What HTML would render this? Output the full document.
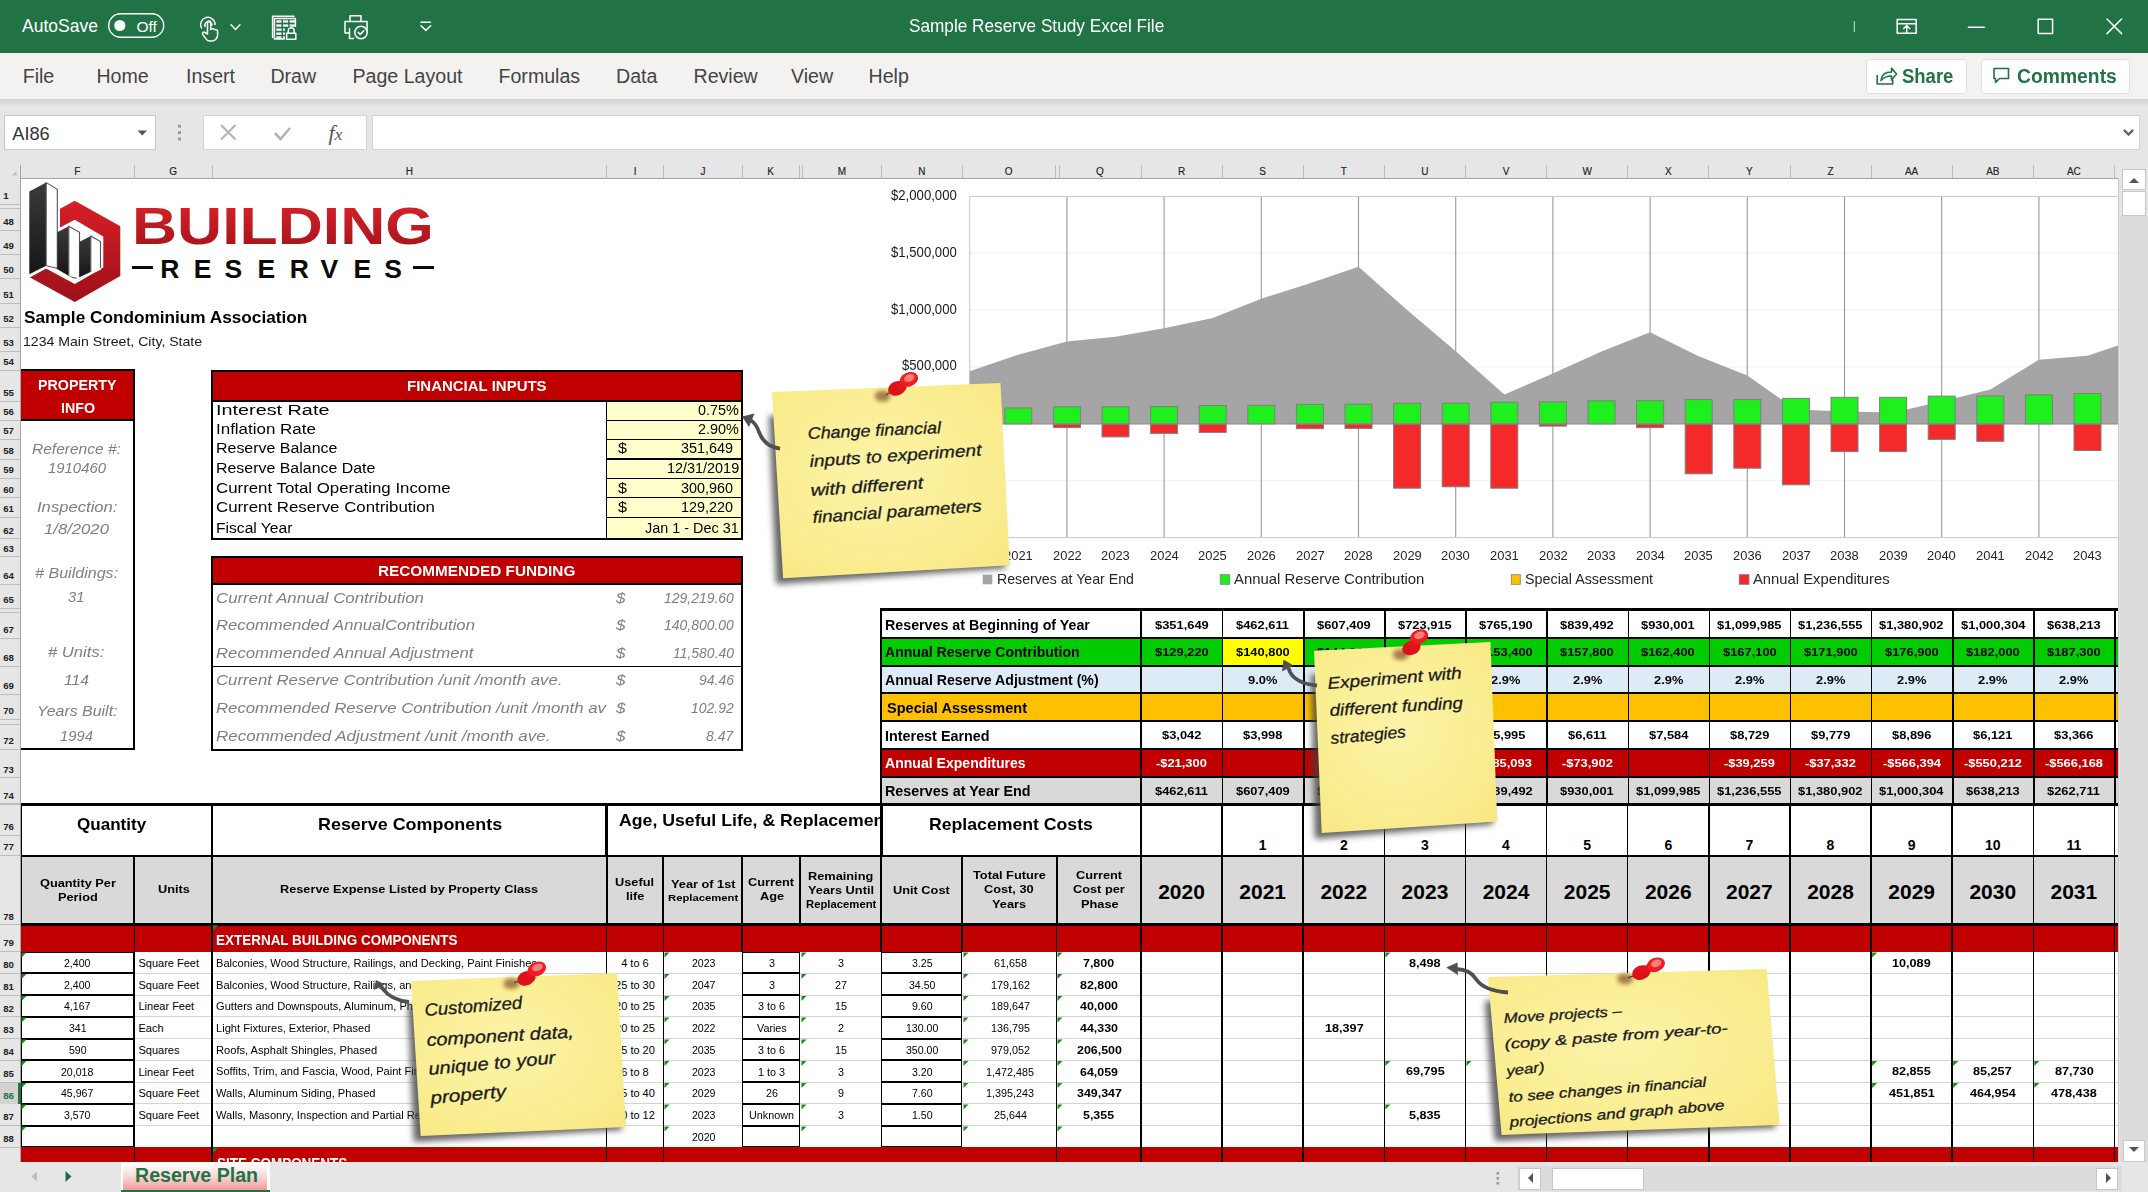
<!DOCTYPE html>
<html><head><meta charset="utf-8"><title>Sample Reserve Study Excel File</title>
<style>
html,body{margin:0;padding:0;}
body{width:2148px;height:1192px;overflow:hidden;position:relative;background:#fff;font-family:"Liberation Sans",sans-serif;}
div,svg{position:absolute;}
.a{position:absolute;overflow:visible;}
.t{display:flex;white-space:nowrap;overflow:hidden;}
.tx{white-space:nowrap;line-height:1;}
</style></head><body>
<div style="left:0.0px;top:0.0px;width:2148.0px;height:53.0px;background:#217346;"></div>
<div class="tx" style="left:22.0px;top:17.8px;font-size:17.5px;color:#fff;">AutoSave</div>
<svg class="a" style="left:0;top:0" width="2148" height="53" viewBox="0 0 2148 53">
<g fill="none" stroke="#fff" stroke-width="1.4">
<rect x="108.7" y="13.7" width="55" height="23.6" rx="11.8"/>
</g>
<circle cx="119.8" cy="25.5" r="5.6" fill="#fff"/>
<g fill="none" stroke="#fff" stroke-width="1.5" stroke-linecap="round" stroke-linejoin="round">
<path d="M201.5 28 a7.2 7.2 0 1 1 13.5 -3.5"/>
<path d="M205 26.5 a3.6 3.6 0 1 1 7 -1.5"/>
<path d="M207.5 34 v-11.5 a1.6 1.6 0 0 1 3.2 0 v7 l1.8-0.6 a1.5 1.5 0 0 1 2 0.6 l1.5 0.2 a1.4 1.4 0 0 1 1.6 1.3 v4 a6 6 0 0 1 -6 6 h-1.5 a5 5 0 0 1 -4.2 -2.2 l-3.2-4.4 a1.5 1.5 0 0 1 2.3-1.9 z"/>
<path d="M231 24.8 l4.5 4.6 l4.5 -4.6"/>
<path d="M272.6 37.5 V16.2 H294" /><rect x="274.4" y="18.4" width="21" height="20.6"/><rect x="276.3" y="20.3" width="5.2" height="2.3" fill="#fff" stroke="none"/><rect x="283.0" y="20.3" width="5.2" height="2.3" fill="#fff" stroke="none"/><rect x="289.7" y="20.3" width="5.2" height="2.3" fill="#fff" stroke="none"/><rect x="276.3" y="24.4" width="5.2" height="2.3" fill="#fff" stroke="none"/><rect x="283.0" y="24.4" width="5.2" height="2.3" fill="#fff" stroke="none"/><rect x="289.7" y="24.4" width="5.2" height="2.3" fill="#fff" stroke="none"/><rect x="276.3" y="28.5" width="5.2" height="2.3" fill="#fff" stroke="none"/><rect x="283.0" y="28.5" width="5.2" height="2.3" fill="#fff" stroke="none"/><rect x="289.7" y="28.5" width="5.2" height="2.3" fill="#fff" stroke="none"/><rect x="276.3" y="32.5" width="5.2" height="2.3" fill="#fff" stroke="none"/><rect x="283.0" y="32.5" width="5.2" height="2.3" fill="#fff" stroke="none"/><rect x="289.7" y="32.5" width="5.2" height="2.3" fill="#fff" stroke="none"/><rect x="276.3" y="36.4" width="5.2" height="2.3" fill="#fff" stroke="none"/><rect x="283.0" y="36.4" width="5.2" height="2.3" fill="#fff" stroke="none"/><rect x="289.7" y="36.4" width="5.2" height="2.3" fill="#fff" stroke="none"/><rect x="284.8" y="27" width="12.5" height="13.5" fill="#217346" stroke="none"/><rect x="286.6" y="33.2" width="9.2" height="6" /><path d="M288.3 33.2 v-2.6 a2.9 2.9 0 0 1 5.8 0 v2.6"/>
<path d="M345 21.5 h22 v9 M345 21.5 v11.5 h4.5 M349.5 28.5 v10 h4 M350 15.8 h11 v5.7 M350 15.8 v5.7"/>
<circle cx="361" cy="32.5" r="6.2"/>
<path d="M358.2 32.4 l2 2 l3.6 -3.6"/>
<path d="M421 22.2 h9.5 M421 25.8 l4.8 4.6 l4.8 -4.6"/>
<path d="M1854.3 21.5 v10" stroke-width="0.8"/>
<rect x="1897.2" y="19.5" width="19" height="13.8"/>
<path d="M1897.2 23.8 h19 M1906.7 33 v-7 M1903.7 28.5 l3-3 l3 3"/>
<path d="M1968.4 27.2 h15.8"/>
<rect x="2038.2" y="19.3" width="14.4" height="14.2"/>
<path d="M2107 19 l14.6 14.6 M2121.6 19 l-14.6 14.6"/>
</g>
</svg>
<div class="tx" style="left:136.5px;top:18.7px;font-size:15.5px;color:#fff;">Off</div>
<div class="tx" style="left:908.5px;top:16.8px;font-size:18.5px;transform:scaleX(0.9296);transform-origin:0 0;color:#fff;">Sample Reserve Study Excel File</div>
<div style="left:0.0px;top:53.0px;width:2148.0px;height:46.0px;background:#f3f2f1;"></div>
<div class="tx" style="left:22.7px;top:66.8px;font-size:19.6px;color:#444;">File</div>
<div class="tx" style="left:96.4px;top:66.8px;font-size:19.6px;color:#444;">Home</div>
<div class="tx" style="left:186.0px;top:66.8px;font-size:19.6px;color:#444;">Insert</div>
<div class="tx" style="left:270.4px;top:66.8px;font-size:19.6px;color:#444;">Draw</div>
<div class="tx" style="left:352.5px;top:66.8px;font-size:19.6px;color:#444;">Page Layout</div>
<div class="tx" style="left:498.5px;top:66.8px;font-size:19.6px;color:#444;">Formulas</div>
<div class="tx" style="left:616.0px;top:66.8px;font-size:19.6px;color:#444;">Data</div>
<div class="tx" style="left:693.5px;top:66.8px;font-size:19.6px;color:#444;">Review</div>
<div class="tx" style="left:791.0px;top:66.8px;font-size:19.6px;color:#444;">View</div>
<div class="tx" style="left:868.5px;top:66.8px;font-size:19.6px;color:#444;">Help</div>
<div style="left:1865.5px;top:59.0px;width:101.0px;height:34.5px;background:#fff;border:1px solid #e1dfdd;border-radius:4px;box-sizing:border-box;"></div>
<div style="left:1980.5px;top:59.0px;width:149.0px;height:34.5px;background:#fff;border:1px solid #e1dfdd;border-radius:4px;box-sizing:border-box;"></div>
<svg class="a" style="left:0;top:0" width="2148" height="100" viewBox="0 0 2148 100">
<g fill="none" stroke="#217346" stroke-width="1.6" stroke-linejoin="round">
<path d="M1877.2 75 v9 h15.5 v-4.5"/>
<path d="M1881 80.5 c0.5-6 4.5-8.5 10.5-8.5 v-4 l5 6 l-5 6 v-4 c-4 0-8 1.5-10.5 4.5z"/>
<path d="M1994 68.5 h14.5 v10 h-9 l-4 3.8 v-3.8 h-1.5z"/>
</g></svg>
<div class="tx" style="left:1901.6px;top:66.9px;font-size:19.4px;transform:scaleX(0.9533);transform-origin:0 0;color:#217346;font-weight:bold;">Share</div>
<div class="tx" style="left:2016.5px;top:66.9px;font-size:19.4px;transform:scaleX(0.9965);transform-origin:0 0;color:#217346;font-weight:bold;">Comments</div>
<div style="left:0.0px;top:99.0px;width:2148.0px;height:61.0px;background:linear-gradient(#d2d2d2 0px,#e6e6e6 7px,#e6e6e6 100%);"></div>
<div style="left:4.3px;top:115.3px;width:152.2px;height:35.0px;background:#fff;border:1px solid #c8c8c8;box-sizing:border-box;"></div>
<div class="tx" style="left:12.3px;top:125.1px;font-size:18.2px;color:#333;">AI86</div>
<div style="left:202.8px;top:115.3px;width:164.5px;height:35.0px;background:#fff;border:1px solid #d4d4d4;box-sizing:border-box;"></div>
<div style="left:372.0px;top:115.3px;width:1768.0px;height:35.0px;background:#fff;border:1px solid #d4d4d4;box-sizing:border-box;"></div>
<svg class="a" style="left:0;top:100" width="2148" height="60" viewBox="0 100 2148 60">
<path d="M137.5 130.5 h9.5 l-4.75 5z" fill="#555"/>
<rect x="178" y="124.8" width="3" height="2.8" fill="#9a9a9a"/>
<rect x="178" y="131.2" width="3" height="2.8" fill="#9a9a9a"/>
<rect x="178" y="137.6" width="3" height="2.8" fill="#9a9a9a"/>
<path d="M2124 130 l4.5 4.5 l4.5 -4.5" fill="none" stroke="#555" stroke-width="2"/>
<g fill="none" stroke="#b4b4b4" stroke-width="1.8">
<path d="M221 125 l14.5 14.5 M235.5 125 l-14.5 14.5" stroke-width="2.2"/>
<path d="M275 133 l5.5 6 l9.5 -11" stroke-width="2.6"/>
</g>
</svg>
<svg class="a" style="left:0;top:100" width="2148" height="60" viewBox="0 100 2148 60"><path d="M2124 130 l4.5 4.5 l4.5 -4.5" fill="none" stroke="#666" stroke-width="2"/></svg>
<div class="tx" style="left:328.5px;top:122.4px;font-size:22px;color:#555;font-family:&quot;Liberation Serif&quot;,serif;"><i>f</i><i style="font-size:17px">x</i></div>
<svg class="a" style="left:0;top:178px" width="450" height="130" viewBox="0 178 450 130">
<defs>
<linearGradient id="gr" x1="0" y1="0" x2="0" y2="1"><stop offset="0" stop-color="#d71f27"/><stop offset="1" stop-color="#9e1119"/></linearGradient>
<linearGradient id="gk" x1="0" y1="0" x2="0" y2="1"><stop offset="0" stop-color="#3a3a3c"/><stop offset="1" stop-color="#161618"/></linearGradient>
</defs>
<path d="M60 208.7 L74.8 200.8 L120.3 226.3 L120.3 276 L74.8 302 L29.6 277.3 L46 268.5 L74.8 284 L103.3 267.5 L103.3 236.5 L74.8 219.8 L60 227.5 Z" fill="url(#gr)"/>
<path d="M29.3 191.6 L46.2 182.6 L46.2 265.8 L29.3 274.2 Z" fill="url(#gk)"/>
<path d="M46.2 182.6 L57.3 189.2 L57.3 268.6 L46.2 265.8 Z" fill="#fff" stroke="#555" stroke-width="1.1"/>
<path d="M57.3 232.2 L68.8 226.3 L68.8 276.5 L57.3 270.5 Z" fill="url(#gk)"/>
<path d="M68.8 226.3 L79.5 232.3 L79.5 279 L68.8 276.5 Z" fill="#fff" stroke="#555" stroke-width="1.1"/>
<path d="M79.5 241.8 L90.8 236 L90.8 272.5 L79.5 279 Z" fill="url(#gk)"/>
<path d="M90.8 236 L100.5 241.5 L100.5 268.5 L90.8 272.5 Z" fill="#fff" stroke="#555" stroke-width="1.1"/>
<path d="M29.5 276.5 L46.2 267.2 L57.3 270.3 M57.3 270.3 L74.8 280.5 L100.8 268.5" fill="none" stroke="#fff" stroke-width="2"/>
</g>
</svg>
<div class="tx" style="left:131.5px;top:201.0px;font-size:51.5px;font-weight:bold;transform:scaleX(1.2129);transform-origin:0 0;background:linear-gradient(#d9222a,#a3121a);-webkit-background-clip:text;background-clip:text;color:transparent;">BUILDING</div>
<div class="tx" style="left:160.3px;top:255.9px;font-size:26.5px;transform:scaleX(1.0000);transform-origin:0 0;color:#0a0a0a;font-weight:bold;">R</div>
<div class="tx" style="left:193.8px;top:255.9px;font-size:26.5px;transform:scaleX(1.0000);transform-origin:0 0;color:#0a0a0a;font-weight:bold;">E</div>
<div class="tx" style="left:224.5px;top:255.9px;font-size:26.5px;transform:scaleX(1.0000);transform-origin:0 0;color:#0a0a0a;font-weight:bold;">S</div>
<div class="tx" style="left:257.5px;top:255.9px;font-size:26.5px;transform:scaleX(1.0000);transform-origin:0 0;color:#0a0a0a;font-weight:bold;">E</div>
<div class="tx" style="left:289.8px;top:255.9px;font-size:26.5px;transform:scaleX(1.0000);transform-origin:0 0;color:#0a0a0a;font-weight:bold;">R</div>
<div class="tx" style="left:320.5px;top:255.9px;font-size:26.5px;transform:scaleX(1.0000);transform-origin:0 0;color:#0a0a0a;font-weight:bold;">V</div>
<div class="tx" style="left:353.5px;top:255.9px;font-size:26.5px;transform:scaleX(1.0000);transform-origin:0 0;color:#0a0a0a;font-weight:bold;">E</div>
<div class="tx" style="left:384.2px;top:255.9px;font-size:26.5px;transform:scaleX(1.0000);transform-origin:0 0;color:#0a0a0a;font-weight:bold;">S</div>
<div style="left:131.5px;top:266.3px;width:21.0px;height:2.8px;background:#0a0a0a;"></div>
<div style="left:412.5px;top:266.3px;width:21.0px;height:2.8px;background:#0a0a0a;"></div>
<div class="tx" style="left:24.4px;top:309.5px;font-size:16px;transform:scaleX(1.0754);transform-origin:0 0;color:#000;font-weight:bold;">Sample Condominium Association</div>
<div class="tx" style="left:23.3px;top:334.7px;font-size:13.6px;transform:scaleX(1.0367);transform-origin:0 0;color:#1a1a1a;">1234 Main Street, City, State</div>
<div style="left:20.0px;top:369.0px;width:115.0px;height:381.0px;border:2px solid #000;border-left:none;box-sizing:border-box;background:#fff;"></div>
<div style="left:20.0px;top:371.0px;width:113.0px;height:48.5px;background:#c00000;"></div>
<div style="left:20.0px;top:419.0px;width:115.0px;height:2.0px;background:#000;"></div>
<div class="tx" style="left:38.0px;top:376.9px;font-size:15px;transform:scaleX(0.9500);transform-origin:0 0;color:#fff;font-weight:bold;">PROPERTY</div>
<div class="tx" style="left:60.8px;top:399.8px;font-size:15px;transform:scaleX(0.9500);transform-origin:0 0;color:#fff;font-weight:bold;">INFO</div>
<div class="tx" style="left:31.8px;top:440.6px;font-size:15px;transform:scaleX(1.0351);transform-origin:0 0;color:#7f7f7f;font-style:italic;">Reference #:</div>
<div class="tx" style="left:48.0px;top:459.6px;font-size:15px;transform:scaleX(0.9932);transform-origin:0 0;color:#7f7f7f;font-style:italic;">1910460</div>
<div class="tx" style="left:36.5px;top:498.8px;font-size:15px;transform:scaleX(1.1096);transform-origin:0 0;color:#7f7f7f;font-style:italic;">Inspection:</div>
<div class="tx" style="left:44.0px;top:520.9px;font-size:15px;transform:scaleX(1.1115);transform-origin:0 0;color:#7f7f7f;font-style:italic;">1/8/2020</div>
<div class="tx" style="left:35.2px;top:564.9px;font-size:15px;transform:scaleX(1.0716);transform-origin:0 0;color:#7f7f7f;font-style:italic;"># Buildings:</div>
<div class="tx" style="left:68.0px;top:589.4px;font-size:15px;transform:scaleX(0.9769);transform-origin:0 0;color:#7f7f7f;font-style:italic;">31</div>
<div class="tx" style="left:47.7px;top:643.7px;font-size:15px;transform:scaleX(1.1071);transform-origin:0 0;color:#7f7f7f;font-style:italic;"># Units:</div>
<div class="tx" style="left:64.4px;top:671.9px;font-size:15px;transform:scaleX(1.0412);transform-origin:0 0;color:#7f7f7f;font-style:italic;">114</div>
<div class="tx" style="left:36.9px;top:702.7px;font-size:15px;transform:scaleX(1.0610);transform-origin:0 0;color:#7f7f7f;font-style:italic;">Years Built:</div>
<div class="tx" style="left:59.7px;top:727.6px;font-size:15px;transform:scaleX(0.9859);transform-origin:0 0;color:#7f7f7f;font-style:italic;">1994</div>
<div style="left:211.0px;top:369.5px;width:532.0px;height:170.0px;border:2px solid #000;box-sizing:border-box;background:#fff;"></div>
<div style="left:213.0px;top:371.5px;width:528.0px;height:28.5px;background:#c00000;"></div>
<div style="left:211.0px;top:400.0px;width:532.0px;height:1.6px;background:#000;"></div>
<div class="tx" style="left:407.0px;top:378.2px;font-size:15px;transform:scaleX(0.9991);transform-origin:0 0;color:#fff;font-weight:bold;">FINANCIAL INPUTS</div>
<div style="left:606.7px;top:401.5px;width:134.3px;height:136.0px;background:#ffffcc;"></div>
<div style="left:606.1px;top:401.0px;width:1.3px;height:137.0px;background:#000;"></div>
<div style="left:606.7px;top:419.8px;width:134.3px;height:1.3px;background:#000;"></div>
<div style="left:606.7px;top:439.0px;width:134.3px;height:1.3px;background:#000;"></div>
<div style="left:606.7px;top:458.4px;width:134.3px;height:1.3px;background:#000;"></div>
<div style="left:606.7px;top:477.9px;width:134.3px;height:1.3px;background:#000;"></div>
<div style="left:606.7px;top:497.2px;width:134.3px;height:1.3px;background:#000;"></div>
<div style="left:606.7px;top:516.6px;width:134.3px;height:1.3px;background:#000;"></div>
<div class="tx" style="left:216.1px;top:401.6px;font-size:15.5px;transform:scaleX(1.2779);transform-origin:0 0;color:#000;">Interest Rate</div>
<div class="tx" style="left:216.1px;top:420.7px;font-size:15.5px;transform:scaleX(1.0938);transform-origin:0 0;color:#000;">Inflation Rate</div>
<div class="tx" style="left:216.1px;top:440.2px;font-size:15.5px;transform:scaleX(1.0285);transform-origin:0 0;color:#000;">Reserve Balance</div>
<div class="tx" style="left:216.1px;top:459.9px;font-size:15.5px;transform:scaleX(1.0278);transform-origin:0 0;color:#000;">Reserve Balance Date</div>
<div class="tx" style="left:216.1px;top:479.5px;font-size:15.5px;transform:scaleX(1.0863);transform-origin:0 0;color:#000;">Current Total Operating Income</div>
<div class="tx" style="left:216.1px;top:498.6px;font-size:15.5px;transform:scaleX(1.0858);transform-origin:0 0;color:#000;">Current Reserve Contribution</div>
<div class="tx" style="left:216.1px;top:519.7px;font-size:15.5px;transform:scaleX(1.0076);transform-origin:0 0;color:#000;">Fiscal Year</div>
<div class="tx" style="left:697.9px;top:401.6px;font-size:15.5px;transform:scaleX(0.9300);transform-origin:0 0;color:#000;">0.75%</div>
<div class="tx" style="left:697.9px;top:420.7px;font-size:15.5px;transform:scaleX(0.9300);transform-origin:0 0;color:#000;">2.90%</div>
<div class="tx" style="left:681.1px;top:440.2px;font-size:15.5px;transform:scaleX(0.9300);transform-origin:0 0;color:#000;">351,649</div>
<div class="tx" style="left:617.5px;top:440.2px;font-size:15.5px;transform:scaleX(1.0440);transform-origin:0 0;color:#000;">$</div>
<div class="tx" style="left:666.7px;top:459.9px;font-size:15.5px;transform:scaleX(0.9300);transform-origin:0 0;color:#000;">12/31/2019</div>
<div class="tx" style="left:681.1px;top:479.5px;font-size:15.5px;transform:scaleX(0.9300);transform-origin:0 0;color:#000;">300,960</div>
<div class="tx" style="left:617.5px;top:479.5px;font-size:15.5px;transform:scaleX(1.0440);transform-origin:0 0;color:#000;">$</div>
<div class="tx" style="left:681.1px;top:498.6px;font-size:15.5px;transform:scaleX(0.9300);transform-origin:0 0;color:#000;">129,220</div>
<div class="tx" style="left:617.5px;top:498.6px;font-size:15.5px;transform:scaleX(1.0440);transform-origin:0 0;color:#000;">$</div>
<div class="tx" style="left:645.1px;top:519.7px;font-size:15.5px;transform:scaleX(0.9300);transform-origin:0 0;color:#000;">Jan 1 - Dec 31</div>
<div style="left:211.0px;top:555.5px;width:532.0px;height:195.0px;border:2px solid #000;box-sizing:border-box;background:#fff;"></div>
<div style="left:213.0px;top:557.5px;width:528.0px;height:25.0px;background:#c00000;"></div>
<div style="left:211.0px;top:582.5px;width:532.0px;height:2.0px;background:#000;"></div>
<div class="tx" style="left:377.9px;top:563.1px;font-size:15px;transform:scaleX(1.0205);transform-origin:0 0;color:#fff;font-weight:bold;">RECOMMENDED FUNDING</div>
<div style="left:211.0px;top:665.5px;width:532.0px;height:1.5px;background:#000;"></div>
<div class="tx" style="left:216.1px;top:590.2px;font-size:15.5px;transform:scaleX(1.0852);transform-origin:0 0;color:#7f7f7f;font-style:italic;">Current Annual Contribution</div>
<div class="tx" style="left:616.0px;top:590.2px;font-size:15.5px;transform:scaleX(1.1020);transform-origin:0 0;color:#7f7f7f;font-style:italic;">$</div>
<div class="tx" style="left:663.8px;top:590.2px;font-size:15.5px;transform:scaleX(0.9000);transform-origin:0 0;color:#7f7f7f;font-style:italic;">129,219.60</div>
<div class="tx" style="left:216.1px;top:617.0px;font-size:15.5px;transform:scaleX(1.0757);transform-origin:0 0;color:#7f7f7f;font-style:italic;">Recommended AnnualContribution</div>
<div class="tx" style="left:616.0px;top:617.0px;font-size:15.5px;transform:scaleX(1.1020);transform-origin:0 0;color:#7f7f7f;font-style:italic;">$</div>
<div class="tx" style="left:663.8px;top:617.0px;font-size:15.5px;transform:scaleX(0.9000);transform-origin:0 0;color:#7f7f7f;font-style:italic;">140,800.00</div>
<div class="tx" style="left:216.1px;top:644.9px;font-size:15.5px;transform:scaleX(1.0798);transform-origin:0 0;color:#7f7f7f;font-style:italic;">Recommended Annual Adjustment</div>
<div class="tx" style="left:616.0px;top:644.9px;font-size:15.5px;transform:scaleX(1.1020);transform-origin:0 0;color:#7f7f7f;font-style:italic;">$</div>
<div class="tx" style="left:672.6px;top:644.9px;font-size:15.5px;transform:scaleX(0.9000);transform-origin:0 0;color:#7f7f7f;font-style:italic;">11,580.40</div>
<div class="tx" style="left:216.1px;top:672.4px;font-size:15.5px;transform:scaleX(1.0808);transform-origin:0 0;color:#7f7f7f;font-style:italic;">Current Reserve Contribution /unit /month ave.</div>
<div class="tx" style="left:616.0px;top:672.4px;font-size:15.5px;transform:scaleX(1.1020);transform-origin:0 0;color:#7f7f7f;font-style:italic;">$</div>
<div class="tx" style="left:698.7px;top:672.4px;font-size:15.5px;transform:scaleX(0.9000);transform-origin:0 0;color:#7f7f7f;font-style:italic;">94.46</div>
<div class="tx" style="left:216.1px;top:700.3px;font-size:15.5px;transform:scaleX(1.0801);transform-origin:0 0;color:#7f7f7f;font-style:italic;">Recommended Reserve Contribution /unit /month av</div>
<div class="tx" style="left:616.0px;top:700.3px;font-size:15.5px;transform:scaleX(1.1020);transform-origin:0 0;color:#7f7f7f;font-style:italic;">$</div>
<div class="tx" style="left:690.9px;top:700.3px;font-size:15.5px;transform:scaleX(0.9000);transform-origin:0 0;color:#7f7f7f;font-style:italic;">102.92</div>
<div class="tx" style="left:216.1px;top:728.4px;font-size:15.5px;transform:scaleX(1.0954);transform-origin:0 0;color:#7f7f7f;font-style:italic;">Recommended Adjustment /unit /month ave.</div>
<div class="tx" style="left:616.0px;top:728.4px;font-size:15.5px;transform:scaleX(1.1020);transform-origin:0 0;color:#7f7f7f;font-style:italic;">$</div>
<div class="tx" style="left:706.4px;top:728.4px;font-size:15.5px;transform:scaleX(0.9000);transform-origin:0 0;color:#7f7f7f;font-style:italic;">8.47</div>
<svg class="a" style="left:880px;top:180px" width="1238" height="420" viewBox="880 180 1238 420"><path d="M969.7 253.2 H2118" stroke="#f0f0f0" stroke-width="1"/><path d="M969.7 310.0 H2118" stroke="#f0f0f0" stroke-width="1"/><path d="M969.7 366.9 H2118" stroke="#f0f0f0" stroke-width="1"/><path d="M969.7 480.7 H2118" stroke="#f0f0f0" stroke-width="1"/><path d="M1066.9 196.4 V537.6" stroke="#999999" stroke-width="1.1"/><path d="M1164.1 196.4 V537.6" stroke="#999999" stroke-width="1.1"/><path d="M1261.3 196.4 V537.6" stroke="#999999" stroke-width="1.1"/><path d="M1358.5 196.4 V537.6" stroke="#999999" stroke-width="1.1"/><path d="M1455.7 196.4 V537.6" stroke="#999999" stroke-width="1.1"/><path d="M1552.9 196.4 V537.6" stroke="#999999" stroke-width="1.1"/><path d="M1650.1 196.4 V537.6" stroke="#999999" stroke-width="1.1"/><path d="M1747.3 196.4 V537.6" stroke="#999999" stroke-width="1.1"/><path d="M1844.5 196.4 V537.6" stroke="#999999" stroke-width="1.1"/><path d="M1941.7 196.4 V537.6" stroke="#999999" stroke-width="1.1"/><path d="M2038.9 196.4 V537.6" stroke="#999999" stroke-width="1.1"/><path d="M969.7 537.6 V196.4 H2118" fill="none" stroke="#c8c8c8" stroke-width="1"/><path d="M969.7 537.6 H2118" stroke="#c8c8c8" stroke-width="1"/><polygon points="969.7,371.3 1018.3,354.7 1066.9,341.4 1115.5,336.7 1164.1,328.3 1212.7,318.0 1261.3,298.7 1309.9,283.2 1358.5,266.8 1407.1,310.0 1455.7,351.2 1504.3,394.5 1552.9,373.6 1601.5,351.4 1650.1,332.3 1698.7,356.3 1747.3,375.6 1795.9,409.5 1844.5,411.5 1893.1,412.6 1941.7,401.4 1990.3,389.5 2038.9,359.7 2087.5,355.7 2118,345.6 2118,423.8 969.7,423.8" fill="#a5a5a5"/><rect x="1004.8" y="408.0" width="27.0" height="15.8" fill="#1ef01e" stroke="#7f7f7f" stroke-width="1"/><rect x="1053.4" y="423.8" width="27.0" height="3.8" fill="#f42a2a" stroke="#7f7f7f" stroke-width="1"/><rect x="1053.4" y="406.8" width="27.0" height="17.0" fill="#1ef01e" stroke="#7f7f7f" stroke-width="1"/><rect x="1102.0" y="423.8" width="27.0" height="13.1" fill="#f42a2a" stroke="#7f7f7f" stroke-width="1"/><rect x="1102.0" y="406.8" width="27.0" height="17.0" fill="#1ef01e" stroke="#7f7f7f" stroke-width="1"/><rect x="1150.6" y="423.8" width="27.0" height="9.6" fill="#f42a2a" stroke="#7f7f7f" stroke-width="1"/><rect x="1150.6" y="406.6" width="27.0" height="17.2" fill="#1ef01e" stroke="#7f7f7f" stroke-width="1"/><rect x="1199.2" y="423.8" width="27.0" height="8.6" fill="#f42a2a" stroke="#7f7f7f" stroke-width="1"/><rect x="1199.2" y="405.5" width="27.0" height="18.3" fill="#1ef01e" stroke="#7f7f7f" stroke-width="1"/><rect x="1247.8" y="405.3" width="27.0" height="18.5" fill="#1ef01e" stroke="#7f7f7f" stroke-width="1"/><rect x="1296.4" y="423.8" width="27.0" height="4.9" fill="#f42a2a" stroke="#7f7f7f" stroke-width="1"/><rect x="1296.4" y="404.4" width="27.0" height="19.4" fill="#1ef01e" stroke="#7f7f7f" stroke-width="1"/><rect x="1345.0" y="423.8" width="27.0" height="4.6" fill="#f42a2a" stroke="#7f7f7f" stroke-width="1"/><rect x="1345.0" y="404.2" width="27.0" height="19.6" fill="#1ef01e" stroke="#7f7f7f" stroke-width="1"/><rect x="1393.6" y="423.8" width="27.0" height="64.4" fill="#f42a2a" stroke="#7f7f7f" stroke-width="1"/><rect x="1393.6" y="403.3" width="27.0" height="20.5" fill="#1ef01e" stroke="#7f7f7f" stroke-width="1"/><rect x="1442.2" y="423.8" width="27.0" height="63.0" fill="#f42a2a" stroke="#7f7f7f" stroke-width="1"/><rect x="1442.2" y="403.2" width="27.0" height="20.6" fill="#1ef01e" stroke="#7f7f7f" stroke-width="1"/><rect x="1490.8" y="423.8" width="27.0" height="64.4" fill="#f42a2a" stroke="#7f7f7f" stroke-width="1"/><rect x="1490.8" y="402.2" width="27.0" height="21.6" fill="#1ef01e" stroke="#7f7f7f" stroke-width="1"/><rect x="1539.4" y="423.8" width="27.0" height="2.3" fill="#f42a2a" stroke="#7f7f7f" stroke-width="1"/><rect x="1539.4" y="401.9" width="27.0" height="21.9" fill="#1ef01e" stroke="#7f7f7f" stroke-width="1"/><rect x="1588.0" y="400.8" width="27.0" height="23.0" fill="#1ef01e" stroke="#7f7f7f" stroke-width="1"/><rect x="1636.6" y="423.8" width="27.0" height="3.8" fill="#f42a2a" stroke="#7f7f7f" stroke-width="1"/><rect x="1636.6" y="400.7" width="27.0" height="23.1" fill="#1ef01e" stroke="#7f7f7f" stroke-width="1"/><rect x="1685.2" y="423.8" width="27.0" height="50.0" fill="#f42a2a" stroke="#7f7f7f" stroke-width="1"/><rect x="1685.2" y="399.6" width="27.0" height="24.2" fill="#1ef01e" stroke="#7f7f7f" stroke-width="1"/><rect x="1733.8" y="423.8" width="27.0" height="44.4" fill="#f42a2a" stroke="#7f7f7f" stroke-width="1"/><rect x="1733.8" y="399.6" width="27.0" height="24.2" fill="#1ef01e" stroke="#7f7f7f" stroke-width="1"/><rect x="1782.4" y="423.8" width="27.0" height="61.0" fill="#f42a2a" stroke="#7f7f7f" stroke-width="1"/><rect x="1782.4" y="398.4" width="27.0" height="25.4" fill="#1ef01e" stroke="#7f7f7f" stroke-width="1"/><rect x="1831.0" y="423.8" width="27.0" height="27.8" fill="#f42a2a" stroke="#7f7f7f" stroke-width="1"/><rect x="1831.0" y="397.3" width="27.0" height="26.5" fill="#1ef01e" stroke="#7f7f7f" stroke-width="1"/><rect x="1879.6" y="423.8" width="27.0" height="27.8" fill="#f42a2a" stroke="#7f7f7f" stroke-width="1"/><rect x="1879.6" y="397.3" width="27.0" height="26.5" fill="#1ef01e" stroke="#7f7f7f" stroke-width="1"/><rect x="1928.2" y="423.8" width="27.0" height="15.6" fill="#f42a2a" stroke="#7f7f7f" stroke-width="1"/><rect x="1928.2" y="396.1" width="27.0" height="27.7" fill="#1ef01e" stroke="#7f7f7f" stroke-width="1"/><rect x="1976.8" y="423.8" width="27.0" height="17.5" fill="#f42a2a" stroke="#7f7f7f" stroke-width="1"/><rect x="1976.8" y="396.0" width="27.0" height="27.8" fill="#1ef01e" stroke="#7f7f7f" stroke-width="1"/><rect x="2025.4" y="394.8" width="27.0" height="29.0" fill="#1ef01e" stroke="#7f7f7f" stroke-width="1"/><rect x="2074.0" y="423.8" width="27.0" height="26.7" fill="#f42a2a" stroke="#7f7f7f" stroke-width="1"/><rect x="2074.0" y="393.5" width="27.0" height="30.3" fill="#1ef01e" stroke="#7f7f7f" stroke-width="1"/><path d="M969.7 423.8 H2118" stroke="#8a8a8a" stroke-width="1.2"/><rect x="982.7" y="574.7" width="9.6" height="9.6" fill="#a5a5a5"/><rect x="1220.2" y="574.7" width="9.6" height="9.6" fill="#1ef01e" stroke="#7f7f7f" stroke-width="0.8"/><rect x="1511.3" y="574.7" width="9" height="9.6" fill="#ffc000" stroke="#7f7f7f" stroke-width="0.8"/><rect x="1739.2" y="574.7" width="9.8" height="9.6" fill="#f42a2a" stroke="#7f7f7f" stroke-width="0.8"/></svg>
<div class="tx" style="left:891.2px;top:188.3px;font-size:14px;transform:scaleX(0.9391);transform-origin:0 0;color:#1a1a1a;">$2,000,000</div>
<div class="tx" style="left:891.2px;top:245.0px;font-size:14px;transform:scaleX(0.9391);transform-origin:0 0;color:#1a1a1a;">$1,500,000</div>
<div class="tx" style="left:891.2px;top:301.7px;font-size:14px;transform:scaleX(0.9391);transform-origin:0 0;color:#1a1a1a;">$1,000,000</div>
<div class="tx" style="left:902.3px;top:358.4px;font-size:14px;transform:scaleX(0.9367);transform-origin:0 0;color:#1a1a1a;">$500,000</div>
<div class="tx" style="left:1003.9px;top:549.0px;font-size:13.2px;transform:scaleX(0.9800);transform-origin:0 0;color:#262626;">2021</div>
<div class="tx" style="left:1052.5px;top:549.0px;font-size:13.2px;transform:scaleX(0.9800);transform-origin:0 0;color:#262626;">2022</div>
<div class="tx" style="left:1101.1px;top:549.0px;font-size:13.2px;transform:scaleX(0.9800);transform-origin:0 0;color:#262626;">2023</div>
<div class="tx" style="left:1149.7px;top:549.0px;font-size:13.2px;transform:scaleX(0.9800);transform-origin:0 0;color:#262626;">2024</div>
<div class="tx" style="left:1198.3px;top:549.0px;font-size:13.2px;transform:scaleX(0.9800);transform-origin:0 0;color:#262626;">2025</div>
<div class="tx" style="left:1246.9px;top:549.0px;font-size:13.2px;transform:scaleX(0.9800);transform-origin:0 0;color:#262626;">2026</div>
<div class="tx" style="left:1295.5px;top:549.0px;font-size:13.2px;transform:scaleX(0.9800);transform-origin:0 0;color:#262626;">2027</div>
<div class="tx" style="left:1344.1px;top:549.0px;font-size:13.2px;transform:scaleX(0.9800);transform-origin:0 0;color:#262626;">2028</div>
<div class="tx" style="left:1392.7px;top:549.0px;font-size:13.2px;transform:scaleX(0.9800);transform-origin:0 0;color:#262626;">2029</div>
<div class="tx" style="left:1441.3px;top:549.0px;font-size:13.2px;transform:scaleX(0.9800);transform-origin:0 0;color:#262626;">2030</div>
<div class="tx" style="left:1489.9px;top:549.0px;font-size:13.2px;transform:scaleX(0.9800);transform-origin:0 0;color:#262626;">2031</div>
<div class="tx" style="left:1538.5px;top:549.0px;font-size:13.2px;transform:scaleX(0.9800);transform-origin:0 0;color:#262626;">2032</div>
<div class="tx" style="left:1587.1px;top:549.0px;font-size:13.2px;transform:scaleX(0.9800);transform-origin:0 0;color:#262626;">2033</div>
<div class="tx" style="left:1635.7px;top:549.0px;font-size:13.2px;transform:scaleX(0.9800);transform-origin:0 0;color:#262626;">2034</div>
<div class="tx" style="left:1684.3px;top:549.0px;font-size:13.2px;transform:scaleX(0.9800);transform-origin:0 0;color:#262626;">2035</div>
<div class="tx" style="left:1732.9px;top:549.0px;font-size:13.2px;transform:scaleX(0.9800);transform-origin:0 0;color:#262626;">2036</div>
<div class="tx" style="left:1781.5px;top:549.0px;font-size:13.2px;transform:scaleX(0.9800);transform-origin:0 0;color:#262626;">2037</div>
<div class="tx" style="left:1830.1px;top:549.0px;font-size:13.2px;transform:scaleX(0.9800);transform-origin:0 0;color:#262626;">2038</div>
<div class="tx" style="left:1878.7px;top:549.0px;font-size:13.2px;transform:scaleX(0.9800);transform-origin:0 0;color:#262626;">2039</div>
<div class="tx" style="left:1927.3px;top:549.0px;font-size:13.2px;transform:scaleX(0.9800);transform-origin:0 0;color:#262626;">2040</div>
<div class="tx" style="left:1975.9px;top:549.0px;font-size:13.2px;transform:scaleX(0.9800);transform-origin:0 0;color:#262626;">2041</div>
<div class="tx" style="left:2024.5px;top:549.0px;font-size:13.2px;transform:scaleX(0.9800);transform-origin:0 0;color:#262626;">2042</div>
<div class="tx" style="left:2073.1px;top:549.0px;font-size:13.2px;transform:scaleX(0.9800);transform-origin:0 0;color:#262626;">2043</div>
<div class="tx" style="left:996.8px;top:571.4px;font-size:15px;transform:scaleX(0.9435);transform-origin:0 0;color:#262626;">Reserves at Year End</div>
<div class="tx" style="left:1234.3px;top:571.4px;font-size:15px;transform:scaleX(0.9928);transform-origin:0 0;color:#262626;">Annual Reserve Contribution</div>
<div class="tx" style="left:1524.8px;top:571.4px;font-size:15px;transform:scaleX(0.9543);transform-origin:0 0;color:#262626;">Special Assessment</div>
<div class="tx" style="left:1752.5px;top:571.4px;font-size:15px;transform:scaleX(0.9868);transform-origin:0 0;color:#262626;">Annual Expenditures</div>
<div style="left:880.7px;top:609.4px;width:1237.3px;height:28.5px;background:#ffffff;"></div>
<div style="left:880.7px;top:637.9px;width:1237.3px;height:27.7px;background:#00cc00;"></div>
<div style="left:880.7px;top:665.6px;width:1237.3px;height:27.7px;background:#ddebf7;"></div>
<div style="left:880.7px;top:693.3px;width:1237.3px;height:27.7px;background:#ffc000;"></div>
<div style="left:880.7px;top:721.0px;width:1237.3px;height:27.7px;background:#ffffff;"></div>
<div style="left:880.7px;top:748.7px;width:1237.3px;height:28.5px;background:#c00000;"></div>
<div style="left:880.7px;top:777.2px;width:1237.3px;height:27.1px;background:#d9d9d9;"></div>
<div style="left:1222.1px;top:637.9px;width:81.1px;height:27.7px;background:#ffff00;"></div>
<div style="left:879.7px;top:608.1px;width:1238.3px;height:2.5px;background:#000;"></div>
<div style="left:879.7px;top:636.9px;width:1238.3px;height:2.0px;background:#000;"></div>
<div style="left:879.7px;top:664.6px;width:1238.3px;height:2.0px;background:#000;"></div>
<div style="left:879.7px;top:692.3px;width:1238.3px;height:2.0px;background:#000;"></div>
<div style="left:879.7px;top:720.0px;width:1238.3px;height:2.0px;background:#000;"></div>
<div style="left:879.7px;top:747.7px;width:1238.3px;height:2.0px;background:#000;"></div>
<div style="left:879.7px;top:776.2px;width:1238.3px;height:2.0px;background:#000;"></div>
<div style="left:879.7px;top:803.0px;width:1238.3px;height:2.5px;background:#000;"></div>
<div style="left:879.7px;top:608.0px;width:2.4px;height:197.5px;background:#000;"></div>
<div style="left:1139.9px;top:608.0px;width:2.2px;height:197.5px;background:#000;"></div>
<div style="left:1221.9px;top:608.0px;width:1.6px;height:197.5px;background:#000;"></div>
<div style="left:1303.0px;top:608.0px;width:1.6px;height:197.5px;background:#000;"></div>
<div style="left:1384.2px;top:608.0px;width:1.6px;height:197.5px;background:#000;"></div>
<div style="left:1465.3px;top:608.0px;width:1.6px;height:197.5px;background:#000;"></div>
<div style="left:1546.4px;top:608.0px;width:1.6px;height:197.5px;background:#000;"></div>
<div style="left:1627.5px;top:608.0px;width:1.6px;height:197.5px;background:#000;"></div>
<div style="left:1708.6px;top:608.0px;width:1.6px;height:197.5px;background:#000;"></div>
<div style="left:1789.8px;top:608.0px;width:1.6px;height:197.5px;background:#000;"></div>
<div style="left:1870.9px;top:608.0px;width:1.6px;height:197.5px;background:#000;"></div>
<div style="left:1952.0px;top:608.0px;width:1.6px;height:197.5px;background:#000;"></div>
<div style="left:2033.1px;top:608.0px;width:1.6px;height:197.5px;background:#000;"></div>
<div style="left:2114.2px;top:608.0px;width:1.6px;height:197.5px;background:#000;"></div>
<div class="tx" style="left:884.9px;top:616.9px;font-size:15px;transform:scaleX(0.9502);transform-origin:0 0;color:#000;font-weight:bold;">Reserves at Beginning of Year</div>
<div class="tx" style="left:1154.7px;top:619.7px;font-size:11.3px;transform:scaleX(1.1400);transform-origin:0 0;color:#000;font-weight:bold;">$351,649</div>
<div class="tx" style="left:1236.2px;top:619.7px;font-size:11.3px;transform:scaleX(1.1400);transform-origin:0 0;color:#000;font-weight:bold;">$462,611</div>
<div class="tx" style="left:1316.9px;top:619.7px;font-size:11.3px;transform:scaleX(1.1400);transform-origin:0 0;color:#000;font-weight:bold;">$607,409</div>
<div class="tx" style="left:1398.1px;top:619.7px;font-size:11.3px;transform:scaleX(1.1400);transform-origin:0 0;color:#000;font-weight:bold;">$723,915</div>
<div class="tx" style="left:1479.2px;top:619.7px;font-size:11.3px;transform:scaleX(1.1400);transform-origin:0 0;color:#000;font-weight:bold;">$765,190</div>
<div class="tx" style="left:1560.3px;top:619.7px;font-size:11.3px;transform:scaleX(1.1400);transform-origin:0 0;color:#000;font-weight:bold;">$839,492</div>
<div class="tx" style="left:1641.4px;top:619.7px;font-size:11.3px;transform:scaleX(1.1400);transform-origin:0 0;color:#000;font-weight:bold;">$930,001</div>
<div class="tx" style="left:1717.2px;top:619.7px;font-size:11.3px;transform:scaleX(1.1400);transform-origin:0 0;color:#000;font-weight:bold;">$1,099,985</div>
<div class="tx" style="left:1798.3px;top:619.7px;font-size:11.3px;transform:scaleX(1.1400);transform-origin:0 0;color:#000;font-weight:bold;">$1,236,555</div>
<div class="tx" style="left:1879.4px;top:619.7px;font-size:11.3px;transform:scaleX(1.1400);transform-origin:0 0;color:#000;font-weight:bold;">$1,380,902</div>
<div class="tx" style="left:1960.5px;top:619.7px;font-size:11.3px;transform:scaleX(1.1400);transform-origin:0 0;color:#000;font-weight:bold;">$1,000,304</div>
<div class="tx" style="left:2047.0px;top:619.7px;font-size:11.3px;transform:scaleX(1.1400);transform-origin:0 0;color:#000;font-weight:bold;">$638,213</div>
<div class="tx" style="left:884.9px;top:643.7px;font-size:15px;transform:scaleX(0.9377);transform-origin:0 0;color:#000;font-weight:bold;">Annual Reserve Contribution</div>
<div class="tx" style="left:1154.7px;top:646.5px;font-size:11.3px;transform:scaleX(1.1400);transform-origin:0 0;color:#000;font-weight:bold;">$129,220</div>
<div class="tx" style="left:1235.8px;top:646.5px;font-size:11.3px;transform:scaleX(1.1400);transform-origin:0 0;color:#000;font-weight:bold;">$140,800</div>
<div class="tx" style="left:1316.9px;top:646.5px;font-size:11.3px;transform:scaleX(1.1400);transform-origin:0 0;color:#000;font-weight:bold;">$144,900</div>
<div class="tx" style="left:1398.1px;top:646.5px;font-size:11.3px;transform:scaleX(1.1400);transform-origin:0 0;color:#000;font-weight:bold;">$149,100</div>
<div class="tx" style="left:1479.2px;top:646.5px;font-size:11.3px;transform:scaleX(1.1400);transform-origin:0 0;color:#000;font-weight:bold;">$153,400</div>
<div class="tx" style="left:1560.3px;top:646.5px;font-size:11.3px;transform:scaleX(1.1400);transform-origin:0 0;color:#000;font-weight:bold;">$157,800</div>
<div class="tx" style="left:1641.4px;top:646.5px;font-size:11.3px;transform:scaleX(1.1400);transform-origin:0 0;color:#000;font-weight:bold;">$162,400</div>
<div class="tx" style="left:1722.5px;top:646.5px;font-size:11.3px;transform:scaleX(1.1400);transform-origin:0 0;color:#000;font-weight:bold;">$167,100</div>
<div class="tx" style="left:1803.7px;top:646.5px;font-size:11.3px;transform:scaleX(1.1400);transform-origin:0 0;color:#000;font-weight:bold;">$171,900</div>
<div class="tx" style="left:1884.8px;top:646.5px;font-size:11.3px;transform:scaleX(1.1400);transform-origin:0 0;color:#000;font-weight:bold;">$176,900</div>
<div class="tx" style="left:1965.9px;top:646.5px;font-size:11.3px;transform:scaleX(1.1400);transform-origin:0 0;color:#000;font-weight:bold;">$182,000</div>
<div class="tx" style="left:2047.0px;top:646.5px;font-size:11.3px;transform:scaleX(1.1400);transform-origin:0 0;color:#000;font-weight:bold;">$187,300</div>
<div class="tx" style="left:884.9px;top:671.8px;font-size:15px;transform:scaleX(0.9410);transform-origin:0 0;color:#000;font-weight:bold;">Annual Reserve Adjustment (%)</div>
<div class="tx" style="left:1248.0px;top:674.6px;font-size:11.3px;transform:scaleX(1.1400);transform-origin:0 0;color:#000;font-weight:bold;">9.0%</div>
<div class="tx" style="left:1329.1px;top:674.6px;font-size:11.3px;transform:scaleX(1.1400);transform-origin:0 0;color:#000;font-weight:bold;">2.9%</div>
<div class="tx" style="left:1410.2px;top:674.6px;font-size:11.3px;transform:scaleX(1.1400);transform-origin:0 0;color:#000;font-weight:bold;">2.9%</div>
<div class="tx" style="left:1491.4px;top:674.6px;font-size:11.3px;transform:scaleX(1.1400);transform-origin:0 0;color:#000;font-weight:bold;">2.9%</div>
<div class="tx" style="left:1572.5px;top:674.6px;font-size:11.3px;transform:scaleX(1.1400);transform-origin:0 0;color:#000;font-weight:bold;">2.9%</div>
<div class="tx" style="left:1653.6px;top:674.6px;font-size:11.3px;transform:scaleX(1.1400);transform-origin:0 0;color:#000;font-weight:bold;">2.9%</div>
<div class="tx" style="left:1734.7px;top:674.6px;font-size:11.3px;transform:scaleX(1.1400);transform-origin:0 0;color:#000;font-weight:bold;">2.9%</div>
<div class="tx" style="left:1815.8px;top:674.6px;font-size:11.3px;transform:scaleX(1.1400);transform-origin:0 0;color:#000;font-weight:bold;">2.9%</div>
<div class="tx" style="left:1897.0px;top:674.6px;font-size:11.3px;transform:scaleX(1.1400);transform-origin:0 0;color:#000;font-weight:bold;">2.9%</div>
<div class="tx" style="left:1978.1px;top:674.6px;font-size:11.3px;transform:scaleX(1.1400);transform-origin:0 0;color:#000;font-weight:bold;">2.9%</div>
<div class="tx" style="left:2059.2px;top:674.6px;font-size:11.3px;transform:scaleX(1.1400);transform-origin:0 0;color:#000;font-weight:bold;">2.9%</div>
<div class="tx" style="left:886.5px;top:699.6px;font-size:15px;transform:scaleX(0.9687);transform-origin:0 0;color:#000;font-weight:bold;">Special Assessment</div>
<div class="tx" style="left:884.9px;top:727.6px;font-size:15px;transform:scaleX(0.9578);transform-origin:0 0;color:#000;font-weight:bold;">Interest Earned</div>
<div class="tx" style="left:1161.9px;top:730.4px;font-size:11.3px;transform:scaleX(1.1400);transform-origin:0 0;color:#000;font-weight:bold;">$3,042</div>
<div class="tx" style="left:1243.0px;top:730.4px;font-size:11.3px;transform:scaleX(1.1400);transform-origin:0 0;color:#000;font-weight:bold;">$3,998</div>
<div class="tx" style="left:1324.1px;top:730.4px;font-size:11.3px;transform:scaleX(1.1400);transform-origin:0 0;color:#000;font-weight:bold;">$4,896</div>
<div class="tx" style="left:1405.2px;top:730.4px;font-size:11.3px;transform:scaleX(1.1400);transform-origin:0 0;color:#000;font-weight:bold;">$5,584</div>
<div class="tx" style="left:1486.3px;top:730.4px;font-size:11.3px;transform:scaleX(1.1400);transform-origin:0 0;color:#000;font-weight:bold;">$5,995</div>
<div class="tx" style="left:1567.8px;top:730.4px;font-size:11.3px;transform:scaleX(1.1400);transform-origin:0 0;color:#000;font-weight:bold;">$6,611</div>
<div class="tx" style="left:1648.6px;top:730.4px;font-size:11.3px;transform:scaleX(1.1400);transform-origin:0 0;color:#000;font-weight:bold;">$7,584</div>
<div class="tx" style="left:1729.7px;top:730.4px;font-size:11.3px;transform:scaleX(1.1400);transform-origin:0 0;color:#000;font-weight:bold;">$8,729</div>
<div class="tx" style="left:1810.8px;top:730.4px;font-size:11.3px;transform:scaleX(1.1400);transform-origin:0 0;color:#000;font-weight:bold;">$9,779</div>
<div class="tx" style="left:1891.9px;top:730.4px;font-size:11.3px;transform:scaleX(1.1400);transform-origin:0 0;color:#000;font-weight:bold;">$8,896</div>
<div class="tx" style="left:1973.1px;top:730.4px;font-size:11.3px;transform:scaleX(1.1400);transform-origin:0 0;color:#000;font-weight:bold;">$6,121</div>
<div class="tx" style="left:2054.2px;top:730.4px;font-size:11.3px;transform:scaleX(1.1400);transform-origin:0 0;color:#000;font-weight:bold;">$3,366</div>
<div class="tx" style="left:884.9px;top:755.3px;font-size:15px;transform:scaleX(0.9372);transform-origin:0 0;color:#fff;font-weight:bold;">Annual Expenditures</div>
<div class="tx" style="left:1156.1px;top:758.1px;font-size:11.3px;transform:scaleX(1.1400);transform-origin:0 0;color:#fff;font-weight:bold;">-$21,300</div>
<div class="tx" style="left:1318.4px;top:758.1px;font-size:11.3px;transform:scaleX(1.1400);transform-origin:0 0;color:#fff;font-weight:bold;">-$18,397</div>
<div class="tx" style="left:1396.3px;top:758.1px;font-size:11.3px;transform:scaleX(1.1400);transform-origin:0 0;color:#fff;font-weight:bold;">-$113,498</div>
<div class="tx" style="left:1480.6px;top:758.1px;font-size:11.3px;transform:scaleX(1.1400);transform-origin:0 0;color:#fff;font-weight:bold;">-$85,093</div>
<div class="tx" style="left:1561.7px;top:758.1px;font-size:11.3px;transform:scaleX(1.1400);transform-origin:0 0;color:#fff;font-weight:bold;">-$73,902</div>
<div class="tx" style="left:1724.0px;top:758.1px;font-size:11.3px;transform:scaleX(1.1400);transform-origin:0 0;color:#fff;font-weight:bold;">-$39,259</div>
<div class="tx" style="left:1805.1px;top:758.1px;font-size:11.3px;transform:scaleX(1.1400);transform-origin:0 0;color:#fff;font-weight:bold;">-$37,332</div>
<div class="tx" style="left:1882.6px;top:758.1px;font-size:11.3px;transform:scaleX(1.1400);transform-origin:0 0;color:#fff;font-weight:bold;">-$566,394</div>
<div class="tx" style="left:1963.7px;top:758.1px;font-size:11.3px;transform:scaleX(1.1400);transform-origin:0 0;color:#fff;font-weight:bold;">-$550,212</div>
<div class="tx" style="left:2044.9px;top:758.1px;font-size:11.3px;transform:scaleX(1.1400);transform-origin:0 0;color:#fff;font-weight:bold;">-$566,168</div>
<div class="tx" style="left:884.9px;top:783.0px;font-size:15px;transform:scaleX(0.9558);transform-origin:0 0;color:#000;font-weight:bold;">Reserves at Year End</div>
<div class="tx" style="left:1155.0px;top:785.8px;font-size:11.3px;transform:scaleX(1.1400);transform-origin:0 0;color:#000;font-weight:bold;">$462,611</div>
<div class="tx" style="left:1235.8px;top:785.8px;font-size:11.3px;transform:scaleX(1.1400);transform-origin:0 0;color:#000;font-weight:bold;">$607,409</div>
<div class="tx" style="left:1316.9px;top:785.8px;font-size:11.3px;transform:scaleX(1.1400);transform-origin:0 0;color:#000;font-weight:bold;">$723,915</div>
<div class="tx" style="left:1398.1px;top:785.8px;font-size:11.3px;transform:scaleX(1.1400);transform-origin:0 0;color:#000;font-weight:bold;">$765,190</div>
<div class="tx" style="left:1479.2px;top:785.8px;font-size:11.3px;transform:scaleX(1.1400);transform-origin:0 0;color:#000;font-weight:bold;">$839,492</div>
<div class="tx" style="left:1560.3px;top:785.8px;font-size:11.3px;transform:scaleX(1.1400);transform-origin:0 0;color:#000;font-weight:bold;">$930,001</div>
<div class="tx" style="left:1636.0px;top:785.8px;font-size:11.3px;transform:scaleX(1.1400);transform-origin:0 0;color:#000;font-weight:bold;">$1,099,985</div>
<div class="tx" style="left:1717.2px;top:785.8px;font-size:11.3px;transform:scaleX(1.1400);transform-origin:0 0;color:#000;font-weight:bold;">$1,236,555</div>
<div class="tx" style="left:1798.3px;top:785.8px;font-size:11.3px;transform:scaleX(1.1400);transform-origin:0 0;color:#000;font-weight:bold;">$1,380,902</div>
<div class="tx" style="left:1879.4px;top:785.8px;font-size:11.3px;transform:scaleX(1.1400);transform-origin:0 0;color:#000;font-weight:bold;">$1,000,304</div>
<div class="tx" style="left:1965.9px;top:785.8px;font-size:11.3px;transform:scaleX(1.1400);transform-origin:0 0;color:#000;font-weight:bold;">$638,213</div>
<div class="tx" style="left:2047.4px;top:785.8px;font-size:11.3px;transform:scaleX(1.1400);transform-origin:0 0;color:#000;font-weight:bold;">$262,711</div>
<div style="left:20.0px;top:855.6px;width:2098.0px;height:68.8px;background:#d9d9d9;"></div>
<div style="left:20.0px;top:924.4px;width:2098.0px;height:27.2px;background:#c00000;"></div>
<div style="left:20.0px;top:1147.3px;width:2098.0px;height:14.7px;background:#c00000;"></div>
<div style="left:20.0px;top:972.9px;width:2098.0px;height:1.0px;background:#d4d4d4;"></div>
<div style="left:20.0px;top:994.6px;width:2098.0px;height:1.0px;background:#d4d4d4;"></div>
<div style="left:20.0px;top:1016.4px;width:2098.0px;height:1.0px;background:#d4d4d4;"></div>
<div style="left:20.0px;top:1038.1px;width:2098.0px;height:1.0px;background:#d4d4d4;"></div>
<div style="left:20.0px;top:1059.8px;width:2098.0px;height:1.0px;background:#d4d4d4;"></div>
<div style="left:20.0px;top:1081.6px;width:2098.0px;height:1.0px;background:#d4d4d4;"></div>
<div style="left:20.0px;top:1103.3px;width:2098.0px;height:1.0px;background:#d4d4d4;"></div>
<div style="left:20.0px;top:1125.1px;width:2098.0px;height:1.0px;background:#d4d4d4;"></div>
<div style="left:20.8px;top:951.6px;width:113.6px;height:21.8px;border:1.4px solid #000;box-sizing:border-box;"></div>
<div style="left:742.4px;top:951.6px;width:58.0px;height:21.8px;border:1.4px solid #000;box-sizing:border-box;"></div>
<div style="left:880.9px;top:951.6px;width:81.4px;height:21.8px;border:1.4px solid #000;box-sizing:border-box;"></div>
<div style="left:20.8px;top:973.4px;width:113.6px;height:21.8px;border:1.4px solid #000;box-sizing:border-box;"></div>
<div style="left:742.4px;top:973.4px;width:58.0px;height:21.8px;border:1.4px solid #000;box-sizing:border-box;"></div>
<div style="left:880.9px;top:973.4px;width:81.4px;height:21.8px;border:1.4px solid #000;box-sizing:border-box;"></div>
<div style="left:20.8px;top:995.1px;width:113.6px;height:21.8px;border:1.4px solid #000;box-sizing:border-box;"></div>
<div style="left:742.4px;top:995.1px;width:58.0px;height:21.8px;border:1.4px solid #000;box-sizing:border-box;"></div>
<div style="left:880.9px;top:995.1px;width:81.4px;height:21.8px;border:1.4px solid #000;box-sizing:border-box;"></div>
<div style="left:20.8px;top:1016.9px;width:113.6px;height:21.7px;border:1.4px solid #000;box-sizing:border-box;"></div>
<div style="left:742.4px;top:1016.9px;width:58.0px;height:21.7px;border:1.4px solid #000;box-sizing:border-box;"></div>
<div style="left:880.9px;top:1016.9px;width:81.4px;height:21.7px;border:1.4px solid #000;box-sizing:border-box;"></div>
<div style="left:20.8px;top:1038.6px;width:113.6px;height:21.8px;border:1.4px solid #000;box-sizing:border-box;"></div>
<div style="left:742.4px;top:1038.6px;width:58.0px;height:21.8px;border:1.4px solid #000;box-sizing:border-box;"></div>
<div style="left:880.9px;top:1038.6px;width:81.4px;height:21.8px;border:1.4px solid #000;box-sizing:border-box;"></div>
<div style="left:20.8px;top:1060.3px;width:113.6px;height:21.8px;border:1.4px solid #000;box-sizing:border-box;"></div>
<div style="left:742.4px;top:1060.3px;width:58.0px;height:21.8px;border:1.4px solid #000;box-sizing:border-box;"></div>
<div style="left:880.9px;top:1060.3px;width:81.4px;height:21.8px;border:1.4px solid #000;box-sizing:border-box;"></div>
<div style="left:20.8px;top:1082.1px;width:113.6px;height:21.8px;border:1.4px solid #000;box-sizing:border-box;"></div>
<div style="left:742.4px;top:1082.1px;width:58.0px;height:21.8px;border:1.4px solid #000;box-sizing:border-box;"></div>
<div style="left:880.9px;top:1082.1px;width:81.4px;height:21.8px;border:1.4px solid #000;box-sizing:border-box;"></div>
<div style="left:20.8px;top:1103.8px;width:113.6px;height:21.8px;border:1.4px solid #000;box-sizing:border-box;"></div>
<div style="left:742.4px;top:1103.8px;width:58.0px;height:21.8px;border:1.4px solid #000;box-sizing:border-box;"></div>
<div style="left:880.9px;top:1103.8px;width:81.4px;height:21.8px;border:1.4px solid #000;box-sizing:border-box;"></div>
<div style="left:20.8px;top:1125.6px;width:113.6px;height:21.8px;border:1.4px solid #000;box-sizing:border-box;"></div>
<div style="left:742.4px;top:1125.6px;width:58.0px;height:21.8px;border:1.4px solid #000;box-sizing:border-box;"></div>
<div style="left:880.9px;top:1125.6px;width:81.4px;height:21.8px;border:1.4px solid #000;box-sizing:border-box;"></div>
<div style="left:20.0px;top:803.0px;width:2098.0px;height:2.6px;background:#000;"></div>
<div style="left:20.0px;top:854.5px;width:2098.0px;height:2.2px;background:#000;"></div>
<div style="left:20.0px;top:923.1px;width:2098.0px;height:2.6px;background:#000;"></div>
<div style="left:19.6px;top:804.3px;width:2.4px;height:51.3px;background:#000;"></div>
<div style="left:210.8px;top:804.3px;width:2.4px;height:51.3px;background:#000;"></div>
<div style="left:605.4px;top:804.3px;width:2.4px;height:51.3px;background:#000;"></div>
<div style="left:880.2px;top:804.3px;width:2.4px;height:51.3px;background:#000;"></div>
<div style="left:1140.0px;top:804.3px;width:2.4px;height:51.3px;background:#000;"></div>
<div style="left:1221.3px;top:804.3px;width:1.6px;height:51.3px;background:#000;"></div>
<div style="left:1302.4px;top:804.3px;width:1.6px;height:51.3px;background:#000;"></div>
<div style="left:1383.6px;top:804.3px;width:1.6px;height:51.3px;background:#000;"></div>
<div style="left:1464.7px;top:804.3px;width:1.6px;height:51.3px;background:#000;"></div>
<div style="left:1545.8px;top:804.3px;width:1.6px;height:51.3px;background:#000;"></div>
<div style="left:1626.9px;top:804.3px;width:1.6px;height:51.3px;background:#000;"></div>
<div style="left:1708.0px;top:804.3px;width:1.6px;height:51.3px;background:#000;"></div>
<div style="left:1789.2px;top:804.3px;width:1.6px;height:51.3px;background:#000;"></div>
<div style="left:1870.3px;top:804.3px;width:1.6px;height:51.3px;background:#000;"></div>
<div style="left:1951.4px;top:804.3px;width:1.6px;height:51.3px;background:#000;"></div>
<div style="left:2032.5px;top:804.3px;width:1.6px;height:51.3px;background:#000;"></div>
<div style="left:2113.6px;top:804.3px;width:1.6px;height:51.3px;background:#000;"></div>
<div style="left:19.6px;top:855.6px;width:2.4px;height:68.8px;background:#000;"></div>
<div style="left:133.3px;top:855.6px;width:2.2px;height:68.8px;background:#000;"></div>
<div style="left:210.8px;top:855.6px;width:2.4px;height:68.8px;background:#000;"></div>
<div style="left:605.5px;top:855.6px;width:2.2px;height:68.8px;background:#000;"></div>
<div style="left:662.2px;top:855.6px;width:2.2px;height:68.8px;background:#000;"></div>
<div style="left:741.1px;top:855.6px;width:2.2px;height:68.8px;background:#000;"></div>
<div style="left:799.2px;top:855.6px;width:2.2px;height:68.8px;background:#000;"></div>
<div style="left:879.9px;top:855.6px;width:2.4px;height:68.8px;background:#000;"></div>
<div style="left:961.0px;top:855.6px;width:2.2px;height:68.8px;background:#000;"></div>
<div style="left:1055.5px;top:855.6px;width:2.2px;height:68.8px;background:#000;"></div>
<div style="left:1139.9px;top:855.6px;width:2.6px;height:68.8px;background:#000;"></div>
<div style="left:1221.3px;top:855.6px;width:1.6px;height:68.8px;background:#000;"></div>
<div style="left:1302.4px;top:855.6px;width:1.6px;height:68.8px;background:#000;"></div>
<div style="left:1383.6px;top:855.6px;width:1.6px;height:68.8px;background:#000;"></div>
<div style="left:1464.7px;top:855.6px;width:1.6px;height:68.8px;background:#000;"></div>
<div style="left:1545.8px;top:855.6px;width:1.6px;height:68.8px;background:#000;"></div>
<div style="left:1626.9px;top:855.6px;width:1.6px;height:68.8px;background:#000;"></div>
<div style="left:1708.0px;top:855.6px;width:1.6px;height:68.8px;background:#000;"></div>
<div style="left:1789.2px;top:855.6px;width:1.6px;height:68.8px;background:#000;"></div>
<div style="left:1870.3px;top:855.6px;width:1.6px;height:68.8px;background:#000;"></div>
<div style="left:1951.4px;top:855.6px;width:1.6px;height:68.8px;background:#000;"></div>
<div style="left:2032.5px;top:855.6px;width:1.6px;height:68.8px;background:#000;"></div>
<div style="left:2113.6px;top:855.6px;width:1.6px;height:68.8px;background:#000;"></div>
<div style="left:133.6px;top:924.4px;width:1.6px;height:27.2px;background:#000;"></div>
<div style="left:211.2px;top:924.4px;width:1.6px;height:27.2px;background:#000;"></div>
<div style="left:605.8px;top:924.4px;width:1.6px;height:27.2px;background:#000;"></div>
<div style="left:662.5px;top:924.4px;width:1.6px;height:27.2px;background:#000;"></div>
<div style="left:741.4px;top:924.4px;width:1.6px;height:27.2px;background:#000;"></div>
<div style="left:880.3px;top:924.4px;width:1.6px;height:27.2px;background:#000;"></div>
<div style="left:961.3px;top:924.4px;width:1.6px;height:27.2px;background:#000;"></div>
<div style="left:1055.8px;top:924.4px;width:1.6px;height:27.2px;background:#000;"></div>
<div style="left:1140.4px;top:924.4px;width:1.6px;height:27.2px;background:#000;"></div>
<div style="left:1221.3px;top:924.4px;width:1.6px;height:27.2px;background:#000;"></div>
<div style="left:1302.4px;top:924.4px;width:1.6px;height:27.2px;background:#000;"></div>
<div style="left:1383.6px;top:924.4px;width:1.6px;height:27.2px;background:#000;"></div>
<div style="left:1464.7px;top:924.4px;width:1.6px;height:27.2px;background:#000;"></div>
<div style="left:1545.8px;top:924.4px;width:1.6px;height:27.2px;background:#000;"></div>
<div style="left:1626.9px;top:924.4px;width:1.6px;height:27.2px;background:#000;"></div>
<div style="left:1708.0px;top:924.4px;width:1.6px;height:27.2px;background:#000;"></div>
<div style="left:1789.2px;top:924.4px;width:1.6px;height:27.2px;background:#000;"></div>
<div style="left:1870.3px;top:924.4px;width:1.6px;height:27.2px;background:#000;"></div>
<div style="left:1951.4px;top:924.4px;width:1.6px;height:27.2px;background:#000;"></div>
<div style="left:2032.5px;top:924.4px;width:1.6px;height:27.2px;background:#000;"></div>
<div style="left:2113.6px;top:924.4px;width:1.6px;height:27.2px;background:#000;"></div>
<div style="left:133.6px;top:951.6px;width:1.6px;height:210.4px;background:#000;"></div>
<div style="left:211.1px;top:951.6px;width:1.8px;height:210.4px;background:#000;"></div>
<div style="left:605.8px;top:951.6px;width:1.6px;height:210.4px;background:#000;"></div>
<div style="left:662.7px;top:951.6px;width:1.2px;height:210.4px;background:#000;"></div>
<div style="left:1055.9px;top:951.6px;width:1.4px;height:210.4px;background:#000;"></div>
<div style="left:1140.4px;top:951.6px;width:1.6px;height:210.4px;background:#000;"></div>
<div style="left:1221.3px;top:951.6px;width:1.6px;height:210.4px;background:#000;"></div>
<div style="left:1302.4px;top:951.6px;width:1.6px;height:210.4px;background:#000;"></div>
<div style="left:1383.6px;top:951.6px;width:1.6px;height:210.4px;background:#000;"></div>
<div style="left:1464.7px;top:951.6px;width:1.6px;height:210.4px;background:#000;"></div>
<div style="left:1545.8px;top:951.6px;width:1.6px;height:210.4px;background:#000;"></div>
<div style="left:1626.9px;top:951.6px;width:1.6px;height:210.4px;background:#000;"></div>
<div style="left:1708.0px;top:951.6px;width:1.6px;height:210.4px;background:#000;"></div>
<div style="left:1789.2px;top:951.6px;width:1.6px;height:210.4px;background:#000;"></div>
<div style="left:1870.3px;top:951.6px;width:1.6px;height:210.4px;background:#000;"></div>
<div style="left:1951.4px;top:951.6px;width:1.6px;height:210.4px;background:#000;"></div>
<div style="left:2032.5px;top:951.6px;width:1.6px;height:210.4px;background:#000;"></div>
<div style="left:2113.6px;top:951.6px;width:1.6px;height:210.4px;background:#000;"></div>
<div class="tx" style="left:76.5px;top:816.0px;font-size:17px;transform:scaleX(1.0037);transform-origin:0 0;color:#000;font-weight:bold;">Quantity</div>
<div class="tx" style="left:317.5px;top:816.0px;font-size:17px;transform:scaleX(1.0533);transform-origin:0 0;color:#000;font-weight:bold;">Reserve Components</div>
<div style="left:606.6px;top:804px;width:274px;height:40px;overflow:hidden;">
<div class="tx" style="left:12.8px;top:8.0px;font-size:17px;transform:scaleX(1.0400);transform-origin:0 0;color:#000;font-weight:bold;">Age, Useful Life, &amp; Replacement</div>
</div>
<div class="tx" style="left:929.3px;top:815.8px;font-size:17px;transform:scaleX(1.0388);transform-origin:0 0;color:#000;font-weight:bold;">Replacement Costs</div>
<div class="tx" style="left:1258.8px;top:838.4px;font-size:14px;transform:scaleX(1.0000);transform-origin:0 0;color:#000;font-weight:bold;">1</div>
<div class="tx" style="left:1339.9px;top:838.4px;font-size:14px;transform:scaleX(1.0000);transform-origin:0 0;color:#000;font-weight:bold;">2</div>
<div class="tx" style="left:1421.0px;top:838.4px;font-size:14px;transform:scaleX(1.0000);transform-origin:0 0;color:#000;font-weight:bold;">3</div>
<div class="tx" style="left:1502.1px;top:838.4px;font-size:14px;transform:scaleX(1.0000);transform-origin:0 0;color:#000;font-weight:bold;">4</div>
<div class="tx" style="left:1583.3px;top:838.4px;font-size:14px;transform:scaleX(1.0000);transform-origin:0 0;color:#000;font-weight:bold;">5</div>
<div class="tx" style="left:1664.4px;top:838.4px;font-size:14px;transform:scaleX(1.0000);transform-origin:0 0;color:#000;font-weight:bold;">6</div>
<div class="tx" style="left:1745.5px;top:838.4px;font-size:14px;transform:scaleX(1.0000);transform-origin:0 0;color:#000;font-weight:bold;">7</div>
<div class="tx" style="left:1826.6px;top:838.4px;font-size:14px;transform:scaleX(1.0000);transform-origin:0 0;color:#000;font-weight:bold;">8</div>
<div class="tx" style="left:1907.7px;top:838.4px;font-size:14px;transform:scaleX(1.0000);transform-origin:0 0;color:#000;font-weight:bold;">9</div>
<div class="tx" style="left:1985.0px;top:838.4px;font-size:14px;transform:scaleX(1.0000);transform-origin:0 0;color:#000;font-weight:bold;">10</div>
<div class="tx" style="left:2066.5px;top:838.4px;font-size:14px;transform:scaleX(1.0000);transform-origin:0 0;color:#000;font-weight:bold;">11</div>
<div class="tx" style="left:39.6px;top:878.0px;font-size:11.5px;transform:scaleX(1.1100);transform-origin:0 0;color:#000;font-weight:bold;">Quantity Per</div>
<div class="tx" style="left:58.2px;top:891.8px;font-size:11.5px;transform:scaleX(1.1100);transform-origin:0 0;color:#000;font-weight:bold;">Period</div>
<div class="tx" style="left:157.8px;top:884.4px;font-size:11.5px;transform:scaleX(1.1100);transform-origin:0 0;color:#000;font-weight:bold;">Units</div>
<div class="tx" style="left:280.0px;top:884.2px;font-size:11.5px;transform:scaleX(1.1067);transform-origin:0 0;color:#000;font-weight:bold;">Reserve Expense Listed by Property Class</div>
<div class="tx" style="left:615.3px;top:877.1px;font-size:11.5px;transform:scaleX(1.1100);transform-origin:0 0;color:#000;font-weight:bold;">Useful</div>
<div class="tx" style="left:625.5px;top:891.1px;font-size:11.5px;transform:scaleX(1.1100);transform-origin:0 0;color:#000;font-weight:bold;">life</div>
<div class="tx" style="left:671.2px;top:878.6px;font-size:11.5px;transform:scaleX(1.1100);transform-origin:0 0;color:#000;font-weight:bold;">Year of 1st</div>
<div class="tx" style="left:668.3px;top:893.4px;font-size:9.8px;transform:scaleX(1.1500);transform-origin:0 0;color:#000;font-weight:bold;">Replacement</div>
<div class="tx" style="left:748.3px;top:877.1px;font-size:11.5px;transform:scaleX(1.1100);transform-origin:0 0;color:#000;font-weight:bold;">Current</div>
<div class="tx" style="left:759.7px;top:891.1px;font-size:11.5px;transform:scaleX(1.1100);transform-origin:0 0;color:#000;font-weight:bold;">Age</div>
<div class="tx" style="left:808.3px;top:871.2px;font-size:11.5px;transform:scaleX(1.1100);transform-origin:0 0;color:#000;font-weight:bold;">Remaining</div>
<div class="tx" style="left:807.7px;top:885.2px;font-size:11.5px;transform:scaleX(1.1100);transform-origin:0 0;color:#000;font-weight:bold;">Years Until</div>
<div class="tx" style="left:805.7px;top:900.1px;font-size:10px;transform:scaleX(1.1300);transform-origin:0 0;color:#000;font-weight:bold;">Replacement</div>
<div class="tx" style="left:892.9px;top:884.6px;font-size:11.5px;transform:scaleX(1.1100);transform-origin:0 0;color:#000;font-weight:bold;">Unit Cost</div>
<div class="tx" style="left:973.0px;top:869.7px;font-size:11.5px;transform:scaleX(1.1100);transform-origin:0 0;color:#000;font-weight:bold;">Total Future</div>
<div class="tx" style="left:984.4px;top:884.1px;font-size:11.5px;transform:scaleX(1.1100);transform-origin:0 0;color:#000;font-weight:bold;">Cost, 30</div>
<div class="tx" style="left:992.2px;top:898.5px;font-size:11.5px;transform:scaleX(1.1100);transform-origin:0 0;color:#000;font-weight:bold;">Years</div>
<div class="tx" style="left:1076.4px;top:869.7px;font-size:11.5px;transform:scaleX(1.1100);transform-origin:0 0;color:#000;font-weight:bold;">Current</div>
<div class="tx" style="left:1073.2px;top:884.1px;font-size:11.5px;transform:scaleX(1.1100);transform-origin:0 0;color:#000;font-weight:bold;">Cost per</div>
<div class="tx" style="left:1080.6px;top:898.5px;font-size:11.5px;transform:scaleX(1.1100);transform-origin:0 0;color:#000;font-weight:bold;">Phase</div>
<div class="tx" style="left:1158.2px;top:880.7px;font-size:21px;transform:scaleX(1.0000);transform-origin:0 0;color:#000;font-weight:bold;">2020</div>
<div class="tx" style="left:1239.3px;top:880.7px;font-size:21px;transform:scaleX(1.0000);transform-origin:0 0;color:#000;font-weight:bold;">2021</div>
<div class="tx" style="left:1320.4px;top:880.7px;font-size:21px;transform:scaleX(1.0000);transform-origin:0 0;color:#000;font-weight:bold;">2022</div>
<div class="tx" style="left:1401.6px;top:880.7px;font-size:21px;transform:scaleX(1.0000);transform-origin:0 0;color:#000;font-weight:bold;">2023</div>
<div class="tx" style="left:1482.7px;top:880.7px;font-size:21px;transform:scaleX(1.0000);transform-origin:0 0;color:#000;font-weight:bold;">2024</div>
<div class="tx" style="left:1563.8px;top:880.7px;font-size:21px;transform:scaleX(1.0000);transform-origin:0 0;color:#000;font-weight:bold;">2025</div>
<div class="tx" style="left:1644.9px;top:880.7px;font-size:21px;transform:scaleX(1.0000);transform-origin:0 0;color:#000;font-weight:bold;">2026</div>
<div class="tx" style="left:1726.0px;top:880.7px;font-size:21px;transform:scaleX(1.0000);transform-origin:0 0;color:#000;font-weight:bold;">2027</div>
<div class="tx" style="left:1807.2px;top:880.7px;font-size:21px;transform:scaleX(1.0000);transform-origin:0 0;color:#000;font-weight:bold;">2028</div>
<div class="tx" style="left:1888.3px;top:880.7px;font-size:21px;transform:scaleX(1.0000);transform-origin:0 0;color:#000;font-weight:bold;">2029</div>
<div class="tx" style="left:1969.4px;top:880.7px;font-size:21px;transform:scaleX(1.0000);transform-origin:0 0;color:#000;font-weight:bold;">2030</div>
<div class="tx" style="left:2050.5px;top:880.7px;font-size:21px;transform:scaleX(1.0000);transform-origin:0 0;color:#000;font-weight:bold;">2031</div>
<div class="tx" style="left:215.9px;top:931.7px;font-size:15px;transform:scaleX(0.8981);transform-origin:0 0;color:#fff;font-weight:bold;">EXTERNAL BUILDING COMPONENTS</div>
<div class="tx" style="left:217.0px;top:1154.5px;font-size:15px;transform:scaleX(0.8985);transform-origin:0 0;color:#fff;font-weight:bold;">SITE COMPONENTS</div>
<div class="tx" style="left:64.3px;top:957.8px;font-size:11px;transform:scaleX(0.9600);transform-origin:0 0;color:#000;">2,400</div>
<div class="tx" style="left:138.5px;top:957.8px;font-size:11px;transform:scaleX(1.0000);transform-origin:0 0;color:#000;">Square Feet</div>
<div style="left:212.5px;top:951.6px;width:393px;height:21px;overflow:hidden;">
<div class="tx" style="left:3.5px;top:6.2px;font-size:11px;transform:scaleX(1.0100);transform-origin:0 0;color:#000;">Balconies, Wood Structure, Railings, and Decking, Paint Finishes</div>
</div>
<div class="tx" style="left:621.2px;top:957.8px;font-size:11px;transform:scaleX(1.0000);transform-origin:0 0;color:#000;">4 to 6</div>
<div class="tx" style="left:692.1px;top:957.8px;font-size:11px;transform:scaleX(0.9600);transform-origin:0 0;color:#000;">2023</div>
<div class="tx" style="left:768.5px;top:957.8px;font-size:11px;transform:scaleX(0.9800);transform-origin:0 0;color:#000;">3</div>
<div class="tx" style="left:838.1px;top:957.8px;font-size:11px;transform:scaleX(0.9800);transform-origin:0 0;color:#000;">3</div>
<div class="tx" style="left:911.5px;top:957.8px;font-size:11px;transform:scaleX(0.9600);transform-origin:0 0;color:#000;">3.25</div>
<div class="tx" style="left:993.5px;top:957.8px;font-size:11px;transform:scaleX(0.9800);transform-origin:0 0;color:#000;">61,658</div>
<div class="tx" style="left:1083.4px;top:957.8px;font-size:11px;transform:scaleX(1.1300);transform-origin:0 0;color:#000;font-weight:bold;">7,800</div>
<div class="tx" style="left:1409.1px;top:957.5px;font-size:11px;transform:scaleX(1.1500);transform-origin:0 0;color:#000;font-weight:bold;">8,498</div>
<div class="tx" style="left:1892.3px;top:957.5px;font-size:11px;transform:scaleX(1.1500);transform-origin:0 0;color:#000;font-weight:bold;">10,089</div>
<div class="tx" style="left:64.3px;top:979.5px;font-size:11px;transform:scaleX(0.9600);transform-origin:0 0;color:#000;">2,400</div>
<div class="tx" style="left:138.5px;top:979.5px;font-size:11px;transform:scaleX(1.0000);transform-origin:0 0;color:#000;">Square Feet</div>
<div style="left:212.5px;top:973.4px;width:393px;height:21px;overflow:hidden;">
<div class="tx" style="left:3.5px;top:6.2px;font-size:11px;transform:scaleX(1.0100);transform-origin:0 0;color:#000;">Balconies, Wood Structure, Railings, and Decking, Replacement</div>
</div>
<div class="tx" style="left:615.1px;top:979.5px;font-size:11px;transform:scaleX(1.0000);transform-origin:0 0;color:#000;">25 to 30</div>
<div class="tx" style="left:692.1px;top:979.5px;font-size:11px;transform:scaleX(0.9600);transform-origin:0 0;color:#000;">2047</div>
<div class="tx" style="left:768.5px;top:979.5px;font-size:11px;transform:scaleX(0.9800);transform-origin:0 0;color:#000;">3</div>
<div class="tx" style="left:835.1px;top:979.5px;font-size:11px;transform:scaleX(0.9800);transform-origin:0 0;color:#000;">27</div>
<div class="tx" style="left:908.6px;top:979.5px;font-size:11px;transform:scaleX(0.9600);transform-origin:0 0;color:#000;">34.50</div>
<div class="tx" style="left:990.5px;top:979.5px;font-size:11px;transform:scaleX(0.9800);transform-origin:0 0;color:#000;">179,162</div>
<div class="tx" style="left:1080.0px;top:979.5px;font-size:11px;transform:scaleX(1.1300);transform-origin:0 0;color:#000;font-weight:bold;">82,800</div>
<div class="tx" style="left:64.3px;top:1001.3px;font-size:11px;transform:scaleX(0.9600);transform-origin:0 0;color:#000;">4,167</div>
<div class="tx" style="left:138.5px;top:1001.3px;font-size:11px;transform:scaleX(1.0000);transform-origin:0 0;color:#000;">Linear Feet</div>
<div style="left:212.5px;top:995.1px;width:393px;height:21px;overflow:hidden;">
<div class="tx" style="left:3.5px;top:6.2px;font-size:11px;transform:scaleX(1.0100);transform-origin:0 0;color:#000;">Gutters and Downspouts, Aluminum, Phased</div>
</div>
<div class="tx" style="left:615.1px;top:1001.3px;font-size:11px;transform:scaleX(1.0000);transform-origin:0 0;color:#000;">20 to 25</div>
<div class="tx" style="left:692.1px;top:1001.3px;font-size:11px;transform:scaleX(0.9600);transform-origin:0 0;color:#000;">2035</div>
<div class="tx" style="left:758.0px;top:1001.3px;font-size:11px;transform:scaleX(0.9800);transform-origin:0 0;color:#000;">3 to 6</div>
<div class="tx" style="left:835.1px;top:1001.3px;font-size:11px;transform:scaleX(0.9800);transform-origin:0 0;color:#000;">15</div>
<div class="tx" style="left:911.5px;top:1001.3px;font-size:11px;transform:scaleX(0.9600);transform-origin:0 0;color:#000;">9.60</div>
<div class="tx" style="left:990.5px;top:1001.3px;font-size:11px;transform:scaleX(0.9800);transform-origin:0 0;color:#000;">189,647</div>
<div class="tx" style="left:1080.0px;top:1001.3px;font-size:11px;transform:scaleX(1.1300);transform-origin:0 0;color:#000;font-weight:bold;">40,000</div>
<div class="tx" style="left:68.7px;top:1023.0px;font-size:11px;transform:scaleX(0.9600);transform-origin:0 0;color:#000;">341</div>
<div class="tx" style="left:138.5px;top:1023.0px;font-size:11px;transform:scaleX(1.0000);transform-origin:0 0;color:#000;">Each</div>
<div style="left:212.5px;top:1016.9px;width:393px;height:21px;overflow:hidden;">
<div class="tx" style="left:3.5px;top:6.2px;font-size:11px;transform:scaleX(1.0100);transform-origin:0 0;color:#000;">Light Fixtures, Exterior, Phased</div>
</div>
<div class="tx" style="left:615.1px;top:1023.0px;font-size:11px;transform:scaleX(1.0000);transform-origin:0 0;color:#000;">20 to 25</div>
<div class="tx" style="left:692.1px;top:1023.0px;font-size:11px;transform:scaleX(0.9600);transform-origin:0 0;color:#000;">2022</div>
<div class="tx" style="left:756.6px;top:1023.0px;font-size:11px;transform:scaleX(0.9800);transform-origin:0 0;color:#000;">Varies</div>
<div class="tx" style="left:838.1px;top:1023.0px;font-size:11px;transform:scaleX(0.9800);transform-origin:0 0;color:#000;">2</div>
<div class="tx" style="left:905.7px;top:1023.0px;font-size:11px;transform:scaleX(0.9600);transform-origin:0 0;color:#000;">130.00</div>
<div class="tx" style="left:990.5px;top:1023.0px;font-size:11px;transform:scaleX(0.9800);transform-origin:0 0;color:#000;">136,795</div>
<div class="tx" style="left:1080.0px;top:1023.0px;font-size:11px;transform:scaleX(1.1300);transform-origin:0 0;color:#000;font-weight:bold;">44,330</div>
<div class="tx" style="left:1324.5px;top:1022.7px;font-size:11px;transform:scaleX(1.1500);transform-origin:0 0;color:#000;font-weight:bold;">18,397</div>
<div class="tx" style="left:68.7px;top:1044.8px;font-size:11px;transform:scaleX(0.9600);transform-origin:0 0;color:#000;">590</div>
<div class="tx" style="left:138.5px;top:1044.8px;font-size:11px;transform:scaleX(1.0000);transform-origin:0 0;color:#000;">Squares</div>
<div style="left:212.5px;top:1038.6px;width:393px;height:21px;overflow:hidden;">
<div class="tx" style="left:3.5px;top:6.2px;font-size:11px;transform:scaleX(1.0100);transform-origin:0 0;color:#000;">Roofs, Asphalt Shingles, Phased</div>
</div>
<div class="tx" style="left:615.1px;top:1044.8px;font-size:11px;transform:scaleX(1.0000);transform-origin:0 0;color:#000;">15 to 20</div>
<div class="tx" style="left:692.1px;top:1044.8px;font-size:11px;transform:scaleX(0.9600);transform-origin:0 0;color:#000;">2035</div>
<div class="tx" style="left:758.0px;top:1044.8px;font-size:11px;transform:scaleX(0.9800);transform-origin:0 0;color:#000;">3 to 6</div>
<div class="tx" style="left:835.1px;top:1044.8px;font-size:11px;transform:scaleX(0.9800);transform-origin:0 0;color:#000;">15</div>
<div class="tx" style="left:905.7px;top:1044.8px;font-size:11px;transform:scaleX(0.9600);transform-origin:0 0;color:#000;">350.00</div>
<div class="tx" style="left:990.5px;top:1044.8px;font-size:11px;transform:scaleX(0.9800);transform-origin:0 0;color:#000;">979,052</div>
<div class="tx" style="left:1076.5px;top:1044.8px;font-size:11px;transform:scaleX(1.1300);transform-origin:0 0;color:#000;font-weight:bold;">206,500</div>
<div class="tx" style="left:61.4px;top:1066.5px;font-size:11px;transform:scaleX(0.9600);transform-origin:0 0;color:#000;">20,018</div>
<div class="tx" style="left:138.5px;top:1066.5px;font-size:11px;transform:scaleX(1.0000);transform-origin:0 0;color:#000;">Linear Feet</div>
<div style="left:212.5px;top:1060.3px;width:393px;height:21px;overflow:hidden;">
<div class="tx" style="left:3.5px;top:6.2px;font-size:11px;transform:scaleX(1.0100);transform-origin:0 0;color:#000;">Soffits, Trim, and Fascia, Wood, Paint Finishes</div>
</div>
<div class="tx" style="left:621.2px;top:1066.5px;font-size:11px;transform:scaleX(1.0000);transform-origin:0 0;color:#000;">6 to 8</div>
<div class="tx" style="left:692.1px;top:1066.5px;font-size:11px;transform:scaleX(0.9600);transform-origin:0 0;color:#000;">2023</div>
<div class="tx" style="left:758.0px;top:1066.5px;font-size:11px;transform:scaleX(0.9800);transform-origin:0 0;color:#000;">1 to 3</div>
<div class="tx" style="left:838.1px;top:1066.5px;font-size:11px;transform:scaleX(0.9800);transform-origin:0 0;color:#000;">3</div>
<div class="tx" style="left:911.5px;top:1066.5px;font-size:11px;transform:scaleX(0.9600);transform-origin:0 0;color:#000;">3.20</div>
<div class="tx" style="left:986.0px;top:1066.5px;font-size:11px;transform:scaleX(0.9800);transform-origin:0 0;color:#000;">1,472,485</div>
<div class="tx" style="left:1080.0px;top:1066.5px;font-size:11px;transform:scaleX(1.1300);transform-origin:0 0;color:#000;font-weight:bold;">64,059</div>
<div class="tx" style="left:1405.6px;top:1066.2px;font-size:11px;transform:scaleX(1.1500);transform-origin:0 0;color:#000;font-weight:bold;">69,795</div>
<div class="tx" style="left:1892.3px;top:1066.2px;font-size:11px;transform:scaleX(1.1500);transform-origin:0 0;color:#000;font-weight:bold;">82,855</div>
<div class="tx" style="left:1973.4px;top:1066.2px;font-size:11px;transform:scaleX(1.1500);transform-origin:0 0;color:#000;font-weight:bold;">85,257</div>
<div class="tx" style="left:2054.5px;top:1066.2px;font-size:11px;transform:scaleX(1.1500);transform-origin:0 0;color:#000;font-weight:bold;">87,730</div>
<div class="tx" style="left:61.4px;top:1088.3px;font-size:11px;transform:scaleX(0.9600);transform-origin:0 0;color:#000;">45,967</div>
<div class="tx" style="left:138.5px;top:1088.3px;font-size:11px;transform:scaleX(1.0000);transform-origin:0 0;color:#000;">Square Feet</div>
<div style="left:212.5px;top:1082.1px;width:393px;height:21px;overflow:hidden;">
<div class="tx" style="left:3.5px;top:6.2px;font-size:11px;transform:scaleX(1.0100);transform-origin:0 0;color:#000;">Walls, Aluminum Siding, Phased</div>
</div>
<div class="tx" style="left:615.1px;top:1088.3px;font-size:11px;transform:scaleX(1.0000);transform-origin:0 0;color:#000;">35 to 40</div>
<div class="tx" style="left:692.1px;top:1088.3px;font-size:11px;transform:scaleX(0.9600);transform-origin:0 0;color:#000;">2029</div>
<div class="tx" style="left:765.5px;top:1088.3px;font-size:11px;transform:scaleX(0.9800);transform-origin:0 0;color:#000;">26</div>
<div class="tx" style="left:838.1px;top:1088.3px;font-size:11px;transform:scaleX(0.9800);transform-origin:0 0;color:#000;">9</div>
<div class="tx" style="left:911.5px;top:1088.3px;font-size:11px;transform:scaleX(0.9600);transform-origin:0 0;color:#000;">7.60</div>
<div class="tx" style="left:986.0px;top:1088.3px;font-size:11px;transform:scaleX(0.9800);transform-origin:0 0;color:#000;">1,395,243</div>
<div class="tx" style="left:1076.5px;top:1088.3px;font-size:11px;transform:scaleX(1.1300);transform-origin:0 0;color:#000;font-weight:bold;">349,347</div>
<div class="tx" style="left:1888.8px;top:1088.0px;font-size:11px;transform:scaleX(1.1500);transform-origin:0 0;color:#000;font-weight:bold;">451,851</div>
<div class="tx" style="left:1969.9px;top:1088.0px;font-size:11px;transform:scaleX(1.1500);transform-origin:0 0;color:#000;font-weight:bold;">464,954</div>
<div class="tx" style="left:2051.0px;top:1088.0px;font-size:11px;transform:scaleX(1.1500);transform-origin:0 0;color:#000;font-weight:bold;">478,438</div>
<div class="tx" style="left:64.3px;top:1110.0px;font-size:11px;transform:scaleX(0.9600);transform-origin:0 0;color:#000;">3,570</div>
<div class="tx" style="left:138.5px;top:1110.0px;font-size:11px;transform:scaleX(1.0000);transform-origin:0 0;color:#000;">Square Feet</div>
<div style="left:212.5px;top:1103.8px;width:393px;height:21px;overflow:hidden;">
<div class="tx" style="left:3.5px;top:6.2px;font-size:11px;transform:scaleX(1.0100);transform-origin:0 0;color:#000;">Walls, Masonry, Inspection and Partial Repointing</div>
</div>
<div class="tx" style="left:615.1px;top:1110.0px;font-size:11px;transform:scaleX(1.0000);transform-origin:0 0;color:#000;">10 to 12</div>
<div class="tx" style="left:692.1px;top:1110.0px;font-size:11px;transform:scaleX(0.9600);transform-origin:0 0;color:#000;">2023</div>
<div class="tx" style="left:749.0px;top:1110.0px;font-size:11px;transform:scaleX(0.9800);transform-origin:0 0;color:#000;">Unknown</div>
<div class="tx" style="left:838.1px;top:1110.0px;font-size:11px;transform:scaleX(0.9800);transform-origin:0 0;color:#000;">3</div>
<div class="tx" style="left:911.5px;top:1110.0px;font-size:11px;transform:scaleX(0.9600);transform-origin:0 0;color:#000;">1.50</div>
<div class="tx" style="left:993.5px;top:1110.0px;font-size:11px;transform:scaleX(0.9800);transform-origin:0 0;color:#000;">25,644</div>
<div class="tx" style="left:1083.4px;top:1110.0px;font-size:11px;transform:scaleX(1.1300);transform-origin:0 0;color:#000;font-weight:bold;">5,355</div>
<div class="tx" style="left:1409.1px;top:1109.7px;font-size:11px;transform:scaleX(1.1500);transform-origin:0 0;color:#000;font-weight:bold;">5,835</div>
<div class="tx" style="left:692.1px;top:1131.8px;font-size:11px;transform:scaleX(0.9600);transform-origin:0 0;color:#000;">2020</div>
<svg class="a" style="left:0;top:0" width="2148" height="1192"><path d="M21.5 952.4 h5 l-5 5z" fill="#1e8a1e"/><path d="M664.5 952.4 h5 l-5 5z" fill="#1e8a1e"/><path d="M801.5 952.4 h5 l-5 5z" fill="#1e8a1e"/><path d="M963.5 952.4 h5 l-5 5z" fill="#1e8a1e"/><path d="M1057.5 952.4 h5 l-5 5z" fill="#1e8a1e"/><path d="M21.5 974.1 h5 l-5 5z" fill="#1e8a1e"/><path d="M664.5 974.1 h5 l-5 5z" fill="#1e8a1e"/><path d="M801.5 974.1 h5 l-5 5z" fill="#1e8a1e"/><path d="M963.5 974.1 h5 l-5 5z" fill="#1e8a1e"/><path d="M1057.5 974.1 h5 l-5 5z" fill="#1e8a1e"/><path d="M21.5 995.9 h5 l-5 5z" fill="#1e8a1e"/><path d="M664.5 995.9 h5 l-5 5z" fill="#1e8a1e"/><path d="M801.5 995.9 h5 l-5 5z" fill="#1e8a1e"/><path d="M963.5 995.9 h5 l-5 5z" fill="#1e8a1e"/><path d="M1057.5 995.9 h5 l-5 5z" fill="#1e8a1e"/><path d="M21.5 1017.6 h5 l-5 5z" fill="#1e8a1e"/><path d="M664.5 1017.6 h5 l-5 5z" fill="#1e8a1e"/><path d="M801.5 1017.6 h5 l-5 5z" fill="#1e8a1e"/><path d="M963.5 1017.6 h5 l-5 5z" fill="#1e8a1e"/><path d="M1057.5 1017.6 h5 l-5 5z" fill="#1e8a1e"/><path d="M21.5 1039.4 h5 l-5 5z" fill="#1e8a1e"/><path d="M664.5 1039.4 h5 l-5 5z" fill="#1e8a1e"/><path d="M801.5 1039.4 h5 l-5 5z" fill="#1e8a1e"/><path d="M963.5 1039.4 h5 l-5 5z" fill="#1e8a1e"/><path d="M1057.5 1039.4 h5 l-5 5z" fill="#1e8a1e"/><path d="M21.5 1061.1 h5 l-5 5z" fill="#1e8a1e"/><path d="M664.5 1061.1 h5 l-5 5z" fill="#1e8a1e"/><path d="M801.5 1061.1 h5 l-5 5z" fill="#1e8a1e"/><path d="M963.5 1061.1 h5 l-5 5z" fill="#1e8a1e"/><path d="M1057.5 1061.1 h5 l-5 5z" fill="#1e8a1e"/><path d="M21.5 1082.9 h5 l-5 5z" fill="#1e8a1e"/><path d="M664.5 1082.9 h5 l-5 5z" fill="#1e8a1e"/><path d="M801.5 1082.9 h5 l-5 5z" fill="#1e8a1e"/><path d="M963.5 1082.9 h5 l-5 5z" fill="#1e8a1e"/><path d="M1057.5 1082.9 h5 l-5 5z" fill="#1e8a1e"/><path d="M21.5 1104.6 h5 l-5 5z" fill="#1e8a1e"/><path d="M664.5 1104.6 h5 l-5 5z" fill="#1e8a1e"/><path d="M801.5 1104.6 h5 l-5 5z" fill="#1e8a1e"/><path d="M963.5 1104.6 h5 l-5 5z" fill="#1e8a1e"/><path d="M1057.5 1104.6 h5 l-5 5z" fill="#1e8a1e"/><path d="M21.5 1126.4 h5 l-5 5z" fill="#1e8a1e"/><path d="M664.5 1126.4 h5 l-5 5z" fill="#1e8a1e"/><path d="M801.5 1126.4 h5 l-5 5z" fill="#1e8a1e"/><path d="M963.5 1126.4 h5 l-5 5z" fill="#1e8a1e"/><path d="M1057.5 1126.4 h5 l-5 5z" fill="#1e8a1e"/><path d="M1385.4 952.4 h5 l-5 5z" fill="#1e8a1e"/><path d="M1872.1 952.4 h5 l-5 5z" fill="#1e8a1e"/><path d="M1385.4 1061.1 h5 l-5 5z" fill="#1e8a1e"/><path d="M1466.5 1061.1 h5 l-5 5z" fill="#1e8a1e"/><path d="M1872.1 1061.1 h5 l-5 5z" fill="#1e8a1e"/><path d="M1953.2 1061.1 h5 l-5 5z" fill="#1e8a1e"/><path d="M2034.3 1061.1 h5 l-5 5z" fill="#1e8a1e"/><path d="M1872.1 1082.9 h5 l-5 5z" fill="#1e8a1e"/><path d="M1953.2 1082.9 h5 l-5 5z" fill="#1e8a1e"/><path d="M2034.3 1082.9 h5 l-5 5z" fill="#1e8a1e"/><path d="M1385.4 1104.6 h5 l-5 5z" fill="#1e8a1e"/><path d="M213.0 925.2 h5 l-5 5z" fill="#1e8a1e"/><path d="M213.0 1148.1 h5 l-5 5z" fill="#1e8a1e"/></svg>
<svg class="a" style="left:732.3px;top:343.2px" width="317.60000000000014" height="275.3" viewBox="732.3 343.2 317.60000000000014 275.3"><defs><filter id="bl1" x="-20%" y="-20%" width="140%" height="140%"><feGaussianBlur stdDeviation="3"/></filter><filter id="bs1" x="-50%" y="-50%" width="200%" height="200%"><feGaussianBlur stdDeviation="2.2"/></filter><radialGradient id="ny1" cx="0.45" cy="0.45" r="0.75"><stop offset="0" stop-color="#fcf3a8"/><stop offset="0.65" stop-color="#faed90"/><stop offset="1" stop-color="#f7e780"/></radialGradient></defs><polygon points="769.3,416.2 992.8,393.2 1005.9,568.4 776.4,584.5" fill="#404040" opacity="0.8" filter="url(#bl1)"/><polygon points="772.3,392.2 1000.8,383.2 1009.9,565.4 783.4,578.5" fill="url(#ny1)"/><ellipse cx="883" cy="396.2" rx="8" ry="5.5" fill="#6e3018" opacity="0.6" filter="url(#bs1)"/><path d="M886 395.2 L897.5 388.5" stroke="#444" stroke-width="1.4"/><ellipse cx="897.5" cy="388.5" rx="9.5" ry="7" transform="rotate(-22 897.5 388.5)" fill="#dc1219"/><path d="M897.5 388.5 L909.2 379.6" stroke="#e3141b" stroke-width="8"/><ellipse cx="909.2" cy="379.6" rx="9.5" ry="7" transform="rotate(-22 909.2 379.6)" fill="#ee1d24"/><ellipse cx="910.2" cy="378.40000000000003" rx="5.5" ry="3.6" transform="rotate(-22 909.2 379.6)" fill="#ff8f85" opacity="0.85"/></svg>
<svg class="a" style="left:0;top:0" width="2148" height="1192"><path d="M780 448.6 C768 447 762 440 759 432 C757 426 755 423 751 420.5" fill="none" stroke="#505050" stroke-width="3.8" stroke-linecap="butt"/><polygon points="742,416.4 754.5,413.5 749,427" fill="#505050"/></svg>
<div class="tx" style="left:808.3px;top:424.5px;font-size:16.5px;transform-origin:0 13.97px;transform:rotate(-2.581deg) scaleX(1.0839);color:#1c1c1c;-webkit-text-stroke:0.3px #1c1c1c;font-style:italic;">Change financial</div>
<div class="tx" style="left:810.3px;top:452.7px;font-size:16.5px;transform-origin:0 13.97px;transform:rotate(-3.865deg) scaleX(1.1582);color:#1c1c1c;-webkit-text-stroke:0.3px #1c1c1c;font-style:italic;">inputs to experiment</div>
<div class="tx" style="left:811.4px;top:481.6px;font-size:16.5px;transform-origin:0 13.97px;transform:rotate(-3.861deg) scaleX(1.2064);color:#1c1c1c;-webkit-text-stroke:0.3px #1c1c1c;font-style:italic;">with different</div>
<div class="tx" style="left:813.0px;top:508.7px;font-size:16.5px;transform-origin:0 13.97px;transform:rotate(-3.960deg) scaleX(1.1402);color:#1c1c1c;-webkit-text-stroke:0.3px #1c1c1c;font-style:italic;">financial parameters</div>
<svg class="a" style="left:1274.4px;top:602.2px" width="263.1999999999998" height="271.0" viewBox="1274.4 602.2 263.1999999999998 271.0"><defs><filter id="bl2" x="-20%" y="-20%" width="140%" height="140%"><feGaussianBlur stdDeviation="3"/></filter><filter id="bs2" x="-50%" y="-50%" width="200%" height="200%"><feGaussianBlur stdDeviation="2.2"/></filter><radialGradient id="ny2" cx="0.45" cy="0.45" r="0.75"><stop offset="0" stop-color="#fcf3a8"/><stop offset="0.65" stop-color="#faed90"/><stop offset="1" stop-color="#f7e780"/></radialGradient></defs><polygon points="1311.4,674.9 1482.9,652.2 1493.6,824.6 1315.1,839.2" fill="#404040" opacity="0.8" filter="url(#bl2)"/><polygon points="1314.4,650.9 1490.9,642.2 1497.6,821.6 1322.1,833.2" fill="url(#ny2)"/><ellipse cx="1401.2" cy="654.7" rx="8" ry="5.5" fill="#6e3018" opacity="0.6" filter="url(#bs2)"/><path d="M1404.2 653.7 L1411.8 648" stroke="#444" stroke-width="1.4"/><ellipse cx="1411.8" cy="648" rx="9.5" ry="7" transform="rotate(-22 1411.8 648)" fill="#dc1219"/><path d="M1411.8 648 L1419.5 636.9" stroke="#e3141b" stroke-width="8"/><ellipse cx="1419.5" cy="636.9" rx="9.5" ry="7" transform="rotate(-22 1419.5 636.9)" fill="#ee1d24"/><ellipse cx="1420.5" cy="635.6999999999999" rx="5.5" ry="3.6" transform="rotate(-22 1419.5 636.9)" fill="#ff8f85" opacity="0.85"/></svg>
<svg class="a" style="left:0;top:0" width="2148" height="1192"><path d="M1317 685.6 C1303 684 1294 680 1290 672 L1288.5 668" fill="none" stroke="#505050" stroke-width="3.8" stroke-linecap="butt"/><polygon points="1283.5,659.5 1282,671.5 1293.5,665.5" fill="#505050"/></svg>
<div class="tx" style="left:1327.9px;top:674.5px;font-size:16.5px;transform-origin:0 13.97px;transform:rotate(-4.523deg) scaleX(1.1452);color:#1c1c1c;-webkit-text-stroke:0.3px #1c1c1c;font-style:italic;">Experiment with</div>
<div class="tx" style="left:1329.8px;top:701.5px;font-size:16.5px;transform-origin:0 13.97px;transform:rotate(-3.311deg) scaleX(1.1266);color:#1c1c1c;-webkit-text-stroke:0.3px #1c1c1c;font-style:italic;">different funding</div>
<div class="tx" style="left:1330.8px;top:729.5px;font-size:16.5px;transform-origin:0 13.97px;transform:rotate(-5.167deg) scaleX(1.0555);color:#1c1c1c;-webkit-text-stroke:0.3px #1c1c1c;font-style:italic;">strategies</div>
<svg class="a" style="left:371.1px;top:932.9px" width="294.9" height="242.89999999999998" viewBox="371.1 932.9 294.9 242.89999999999998"><defs><filter id="bl3" x="-20%" y="-20%" width="140%" height="140%"><feGaussianBlur stdDeviation="3"/></filter><filter id="bs3" x="-50%" y="-50%" width="200%" height="200%"><feGaussianBlur stdDeviation="2.2"/></filter><radialGradient id="ny3" cx="0.45" cy="0.45" r="0.75"><stop offset="0" stop-color="#fcf3a8"/><stop offset="0.65" stop-color="#faed90"/><stop offset="1" stop-color="#f7e780"/></radialGradient></defs><polygon points="408.1,1004.8 609.2,982.9 622,1130 413.8,1141.8" fill="#404040" opacity="0.8" filter="url(#bl3)"/><polygon points="411.1,980.8 617.2,972.9 626,1127 420.8,1135.8" fill="url(#ny3)"/><ellipse cx="511.5" cy="983.5" rx="8" ry="5.5" fill="#6e3018" opacity="0.6" filter="url(#bs3)"/><path d="M514.5 982.5 L526.5 978.2" stroke="#444" stroke-width="1.4"/><ellipse cx="526.5" cy="978.2" rx="9.5" ry="7" transform="rotate(-22 526.5 978.2)" fill="#dc1219"/><path d="M526.5 978.2 L537 968.8" stroke="#e3141b" stroke-width="8"/><ellipse cx="537" cy="968.8" rx="9.5" ry="7" transform="rotate(-22 537 968.8)" fill="#ee1d24"/><ellipse cx="538" cy="967.5999999999999" rx="5.5" ry="3.6" transform="rotate(-22 537 968.8)" fill="#ff8f85" opacity="0.85"/></svg>
<svg class="a" style="left:0;top:0" width="2148" height="1192"><path d="M409 1002 C396 1000.5 388 996 383 989 L381 986.5" fill="none" stroke="#505050" stroke-width="3.8" stroke-linecap="butt"/><polygon points="375.9,980 374,990 385,984.5" fill="#505050"/></svg>
<div class="tx" style="left:425.2px;top:1001.8px;font-size:17.5px;transform-origin:0 14.81px;transform:rotate(-4.448deg) scaleX(1.0606);color:#1c1c1c;-webkit-text-stroke:0.3px #1c1c1c;font-style:italic;">Customized</div>
<div class="tx" style="left:427.0px;top:1031.7px;font-size:17.5px;transform-origin:0 14.81px;transform:rotate(-3.309deg) scaleX(1.1294);color:#1c1c1c;-webkit-text-stroke:0.3px #1c1c1c;font-style:italic;">component data,</div>
<div class="tx" style="left:428.7px;top:1061.2px;font-size:17.5px;transform-origin:0 14.81px;transform:rotate(-5.182deg) scaleX(1.1479);color:#1c1c1c;-webkit-text-stroke:0.3px #1c1c1c;font-style:italic;">unique to your</div>
<div class="tx" style="left:430.5px;top:1090.2px;font-size:17.5px;transform-origin:0 14.81px;transform:rotate(-5.283deg) scaleX(1.1842);color:#1c1c1c;-webkit-text-stroke:0.3px #1c1c1c;font-style:italic;">property</div>
<svg class="a" style="left:1447.7px;top:929.4px" width="371.39999999999986" height="245.89999999999998" viewBox="1447.7 929.4 371.39999999999986 245.89999999999998"><defs><filter id="bl4" x="-20%" y="-20%" width="140%" height="140%"><feGaussianBlur stdDeviation="3"/></filter><filter id="bs4" x="-50%" y="-50%" width="200%" height="200%"><feGaussianBlur stdDeviation="2.2"/></filter><radialGradient id="ny4" cx="0.45" cy="0.45" r="0.75"><stop offset="0" stop-color="#fcf3a8"/><stop offset="0.65" stop-color="#faed90"/><stop offset="1" stop-color="#f7e780"/></radialGradient></defs><polygon points="1484.7,1001.5 1758.5,979.4 1775.1,1128.4 1494.3,1141.3" fill="#404040" opacity="0.8" filter="url(#bl4)"/><polygon points="1487.7,977.5 1766.5,969.4 1779.1,1125.4 1501.3,1135.3" fill="url(#ny4)"/><ellipse cx="1624.8" cy="979.3" rx="8" ry="5.5" fill="#6e3018" opacity="0.6" filter="url(#bs4)"/><path d="M1627.8 978.3 L1641 973" stroke="#444" stroke-width="1.4"/><ellipse cx="1641" cy="973" rx="9.5" ry="7" transform="rotate(-22 1641 973)" fill="#dc1219"/><path d="M1641 973 L1655.5 965.2" stroke="#e3141b" stroke-width="8"/><ellipse cx="1655.5" cy="965.2" rx="9.5" ry="7" transform="rotate(-22 1655.5 965.2)" fill="#ee1d24"/><ellipse cx="1656.5" cy="964.0" rx="5.5" ry="3.6" transform="rotate(-22 1655.5 965.2)" fill="#ff8f85" opacity="0.85"/></svg>
<svg class="a" style="left:0;top:0" width="2148" height="1192"><path d="M1508 992.5 C1494 991.5 1482 988 1476 979 C1472 972 1466 969.5 1456 969" fill="none" stroke="#505050" stroke-width="3.8" stroke-linecap="butt"/><polygon points="1446.2,967.5 1457.5,962.5 1458,975" fill="#505050"/></svg>
<div class="tx" style="left:1504.0px;top:1010.7px;font-size:14px;transform-origin:0 11.85px;transform:rotate(-3.489deg) scaleX(1.1973);color:#1c1c1c;-webkit-text-stroke:0.3px #1c1c1c;font-style:italic;">Move projects &#8211;</div>
<div class="tx" style="left:1504.9px;top:1036.8px;font-size:14px;transform-origin:0 11.85px;transform:rotate(-4.159deg) scaleX(1.3190);color:#1c1c1c;-webkit-text-stroke:0.3px #1c1c1c;font-style:italic;">(copy &amp; paste from year-to-</div>
<div class="tx" style="left:1506.7px;top:1063.9px;font-size:14px;transform-origin:0 11.85px;transform:rotate(-6.771deg) scaleX(1.1965);color:#1c1c1c;-webkit-text-stroke:0.3px #1c1c1c;font-style:italic;">year)</div>
<div class="tx" style="left:1508.5px;top:1090.1px;font-size:14px;transform-origin:0 11.85px;transform:rotate(-4.459deg) scaleX(1.2006);color:#1c1c1c;-webkit-text-stroke:0.3px #1c1c1c;font-style:italic;">to see changes in financial</div>
<div class="tx" style="left:1510.3px;top:1115.3px;font-size:14px;transform-origin:0 11.85px;transform:rotate(-4.580deg) scaleX(1.2190);color:#1c1c1c;-webkit-text-stroke:0.3px #1c1c1c;font-style:italic;">projections and graph above</div>
<div style="left:0.0px;top:160.0px;width:2118.0px;height:18.0px;background:#e6e6e6;"></div>
<div style="left:0.0px;top:178.0px;width:2118.0px;height:1.0px;background:#a6a6a6;"></div>
<div style="left:0.0px;top:178.0px;width:19.5px;height:984.0px;background:#e6e6e6;"></div>
<div style="left:19.5px;top:165.0px;width:1.0px;height:997.0px;background:#a6a6a6;"></div>
<svg class="a" style="left:0;top:160" width="20" height="18"><path d="M16.5 11 v4.5 h-4.5z" fill="#c0c0c0"/></svg>
<div class="tx" style="left:37.2px;top:166.9px;width:80px;text-align:center;font-size:10px;color:#222;-webkit-text-stroke:0.15px #222;">F</div>
<div class="tx" style="left:133.2px;top:166.9px;width:80px;text-align:center;font-size:10px;color:#222;-webkit-text-stroke:0.15px #222;">G</div>
<div class="tx" style="left:369.3px;top:166.9px;width:80px;text-align:center;font-size:10px;color:#222;-webkit-text-stroke:0.15px #222;">H</div>
<div class="tx" style="left:595.2px;top:166.9px;width:80px;text-align:center;font-size:10px;color:#222;-webkit-text-stroke:0.15px #222;">I</div>
<div class="tx" style="left:663.0px;top:166.9px;width:80px;text-align:center;font-size:10px;color:#222;-webkit-text-stroke:0.15px #222;">J</div>
<div class="tx" style="left:730.7px;top:166.9px;width:80px;text-align:center;font-size:10px;color:#222;-webkit-text-stroke:0.15px #222;">K</div>
<div class="tx" style="left:802.0px;top:166.9px;width:80px;text-align:center;font-size:10px;color:#222;-webkit-text-stroke:0.15px #222;">M</div>
<div class="tx" style="left:881.8px;top:166.9px;width:80px;text-align:center;font-size:10px;color:#222;-webkit-text-stroke:0.15px #222;">N</div>
<div class="tx" style="left:968.6px;top:166.9px;width:80px;text-align:center;font-size:10px;color:#222;-webkit-text-stroke:0.15px #222;">O</div>
<div class="tx" style="left:1060.0px;top:166.9px;width:80px;text-align:center;font-size:10px;color:#222;-webkit-text-stroke:0.15px #222;">Q</div>
<div class="tx" style="left:1141.6px;top:166.9px;width:80px;text-align:center;font-size:10px;color:#222;-webkit-text-stroke:0.15px #222;">R</div>
<div class="tx" style="left:1222.7px;top:166.9px;width:80px;text-align:center;font-size:10px;color:#222;-webkit-text-stroke:0.15px #222;">S</div>
<div class="tx" style="left:1303.8px;top:166.9px;width:80px;text-align:center;font-size:10px;color:#222;-webkit-text-stroke:0.15px #222;">T</div>
<div class="tx" style="left:1384.9px;top:166.9px;width:80px;text-align:center;font-size:10px;color:#222;-webkit-text-stroke:0.15px #222;">U</div>
<div class="tx" style="left:1466.0px;top:166.9px;width:80px;text-align:center;font-size:10px;color:#222;-webkit-text-stroke:0.15px #222;">V</div>
<div class="tx" style="left:1547.2px;top:166.9px;width:80px;text-align:center;font-size:10px;color:#222;-webkit-text-stroke:0.15px #222;">W</div>
<div class="tx" style="left:1628.3px;top:166.9px;width:80px;text-align:center;font-size:10px;color:#222;-webkit-text-stroke:0.15px #222;">X</div>
<div class="tx" style="left:1709.4px;top:166.9px;width:80px;text-align:center;font-size:10px;color:#222;-webkit-text-stroke:0.15px #222;">Y</div>
<div class="tx" style="left:1790.5px;top:166.9px;width:80px;text-align:center;font-size:10px;color:#222;-webkit-text-stroke:0.15px #222;">Z</div>
<div class="tx" style="left:1871.6px;top:166.9px;width:80px;text-align:center;font-size:10px;color:#222;-webkit-text-stroke:0.15px #222;">AA</div>
<div class="tx" style="left:1952.8px;top:166.9px;width:80px;text-align:center;font-size:10px;color:#222;-webkit-text-stroke:0.15px #222;">AB</div>
<div class="tx" style="left:2033.9px;top:166.9px;width:80px;text-align:center;font-size:10px;color:#222;-webkit-text-stroke:0.15px #222;">AC</div>
<div style="left:133.9px;top:165.0px;width:1.0px;height:13.0px;background:#bdbdbd;"></div>
<div style="left:211.5px;top:165.0px;width:1.0px;height:13.0px;background:#bdbdbd;"></div>
<div style="left:606.1px;top:165.0px;width:1.0px;height:13.0px;background:#bdbdbd;"></div>
<div style="left:663.2px;top:165.0px;width:1.0px;height:13.0px;background:#bdbdbd;"></div>
<div style="left:741.9px;top:165.0px;width:1.0px;height:13.0px;background:#bdbdbd;"></div>
<div style="left:798.5px;top:165.0px;width:1.0px;height:13.0px;background:#bdbdbd;"></div>
<div style="left:802.2px;top:165.0px;width:1.0px;height:13.0px;background:#bdbdbd;"></div>
<div style="left:880.9px;top:165.0px;width:1.0px;height:13.0px;background:#bdbdbd;"></div>
<div style="left:961.8px;top:165.0px;width:1.0px;height:13.0px;background:#bdbdbd;"></div>
<div style="left:1054.5px;top:165.0px;width:1.0px;height:13.0px;background:#bdbdbd;"></div>
<div style="left:1058.5px;top:165.0px;width:1.0px;height:13.0px;background:#bdbdbd;"></div>
<div style="left:1140.5px;top:165.0px;width:1.0px;height:13.0px;background:#bdbdbd;"></div>
<div style="left:1221.6px;top:165.0px;width:1.0px;height:13.0px;background:#bdbdbd;"></div>
<div style="left:1302.7px;top:165.0px;width:1.0px;height:13.0px;background:#bdbdbd;"></div>
<div style="left:1383.9px;top:165.0px;width:1.0px;height:13.0px;background:#bdbdbd;"></div>
<div style="left:1465.0px;top:165.0px;width:1.0px;height:13.0px;background:#bdbdbd;"></div>
<div style="left:1546.1px;top:165.0px;width:1.0px;height:13.0px;background:#bdbdbd;"></div>
<div style="left:1627.2px;top:165.0px;width:1.0px;height:13.0px;background:#bdbdbd;"></div>
<div style="left:1708.3px;top:165.0px;width:1.0px;height:13.0px;background:#bdbdbd;"></div>
<div style="left:1789.5px;top:165.0px;width:1.0px;height:13.0px;background:#bdbdbd;"></div>
<div style="left:1870.6px;top:165.0px;width:1.0px;height:13.0px;background:#bdbdbd;"></div>
<div style="left:1951.7px;top:165.0px;width:1.0px;height:13.0px;background:#bdbdbd;"></div>
<div style="left:2032.8px;top:165.0px;width:1.0px;height:13.0px;background:#bdbdbd;"></div>
<div style="left:2113.9px;top:165.0px;width:1.0px;height:13.0px;background:#bdbdbd;"></div>
<div class="tx" style="left:3.2px;top:190.9px;font-size:9.6px;color:#222;font-weight:bold;">1</div>
<div style="left:0.0px;top:203.5px;width:19.5px;height:1.0px;background:#bdbdbd;"></div>
<div class="tx" style="left:3.2px;top:217.3px;font-size:9.6px;color:#222;font-weight:bold;">48</div>
<div style="left:0.0px;top:229.9px;width:19.5px;height:1.0px;background:#bdbdbd;"></div>
<div class="tx" style="left:3.2px;top:241.2px;font-size:9.6px;color:#222;font-weight:bold;">49</div>
<div style="left:0.0px;top:253.8px;width:19.5px;height:1.0px;background:#bdbdbd;"></div>
<div class="tx" style="left:3.2px;top:265.1px;font-size:9.6px;color:#222;font-weight:bold;">50</div>
<div style="left:0.0px;top:277.7px;width:19.5px;height:1.0px;background:#bdbdbd;"></div>
<div class="tx" style="left:3.2px;top:290.3px;font-size:9.6px;color:#222;font-weight:bold;">51</div>
<div style="left:0.0px;top:302.9px;width:19.5px;height:1.0px;background:#bdbdbd;"></div>
<div class="tx" style="left:3.2px;top:314.2px;font-size:9.6px;color:#222;font-weight:bold;">52</div>
<div style="left:0.0px;top:326.8px;width:19.5px;height:1.0px;background:#bdbdbd;"></div>
<div class="tx" style="left:3.2px;top:338.1px;font-size:9.6px;color:#222;font-weight:bold;">53</div>
<div style="left:0.0px;top:350.7px;width:19.5px;height:1.0px;background:#bdbdbd;"></div>
<div class="tx" style="left:3.2px;top:357.4px;font-size:9.6px;color:#222;font-weight:bold;">54</div>
<div style="left:0.0px;top:370.0px;width:19.5px;height:1.0px;background:#bdbdbd;"></div>
<div class="tx" style="left:3.2px;top:388.2px;font-size:9.6px;color:#222;font-weight:bold;">55</div>
<div style="left:0.0px;top:400.8px;width:19.5px;height:1.0px;background:#bdbdbd;"></div>
<div class="tx" style="left:3.2px;top:407.2px;font-size:9.6px;color:#222;font-weight:bold;">56</div>
<div style="left:0.0px;top:419.8px;width:19.5px;height:1.0px;background:#bdbdbd;"></div>
<div class="tx" style="left:3.2px;top:426.2px;font-size:9.6px;color:#222;font-weight:bold;">57</div>
<div style="left:0.0px;top:438.8px;width:19.5px;height:1.0px;background:#bdbdbd;"></div>
<div class="tx" style="left:3.2px;top:445.9px;font-size:9.6px;color:#222;font-weight:bold;">58</div>
<div style="left:0.0px;top:458.5px;width:19.5px;height:1.0px;background:#bdbdbd;"></div>
<div class="tx" style="left:3.2px;top:465.2px;font-size:9.6px;color:#222;font-weight:bold;">59</div>
<div style="left:0.0px;top:477.8px;width:19.5px;height:1.0px;background:#bdbdbd;"></div>
<div class="tx" style="left:3.2px;top:484.6px;font-size:9.6px;color:#222;font-weight:bold;">60</div>
<div style="left:0.0px;top:497.2px;width:19.5px;height:1.0px;background:#bdbdbd;"></div>
<div class="tx" style="left:3.2px;top:504.1px;font-size:9.6px;color:#222;font-weight:bold;">61</div>
<div style="left:0.0px;top:516.7px;width:19.5px;height:1.0px;background:#bdbdbd;"></div>
<div class="tx" style="left:3.2px;top:525.5px;font-size:9.6px;color:#222;font-weight:bold;">62</div>
<div style="left:0.0px;top:538.1px;width:19.5px;height:1.0px;background:#bdbdbd;"></div>
<div class="tx" style="left:3.2px;top:543.7px;font-size:9.6px;color:#222;font-weight:bold;">63</div>
<div style="left:0.0px;top:556.3px;width:19.5px;height:1.0px;background:#bdbdbd;"></div>
<div class="tx" style="left:3.2px;top:570.9px;font-size:9.6px;color:#222;font-weight:bold;">64</div>
<div style="left:0.0px;top:583.5px;width:19.5px;height:1.0px;background:#bdbdbd;"></div>
<div class="tx" style="left:3.2px;top:595.4px;font-size:9.6px;color:#222;font-weight:bold;">65</div>
<div style="left:0.0px;top:608.0px;width:19.5px;height:1.0px;background:#bdbdbd;"></div>
<div class="tx" style="left:3.2px;top:625.2px;font-size:9.6px;color:#222;font-weight:bold;">67</div>
<div style="left:0.0px;top:637.8px;width:19.5px;height:1.0px;background:#bdbdbd;"></div>
<div class="tx" style="left:3.2px;top:653.3px;font-size:9.6px;color:#222;font-weight:bold;">68</div>
<div style="left:0.0px;top:665.9px;width:19.5px;height:1.0px;background:#bdbdbd;"></div>
<div class="tx" style="left:3.2px;top:680.9px;font-size:9.6px;color:#222;font-weight:bold;">69</div>
<div style="left:0.0px;top:693.5px;width:19.5px;height:1.0px;background:#bdbdbd;"></div>
<div class="tx" style="left:3.2px;top:705.9px;font-size:9.6px;color:#222;font-weight:bold;">70</div>
<div style="left:0.0px;top:718.5px;width:19.5px;height:1.0px;background:#bdbdbd;"></div>
<div class="tx" style="left:3.2px;top:735.9px;font-size:9.6px;color:#222;font-weight:bold;">72</div>
<div style="left:0.0px;top:748.5px;width:19.5px;height:1.0px;background:#bdbdbd;"></div>
<div class="tx" style="left:3.2px;top:764.7px;font-size:9.6px;color:#222;font-weight:bold;">73</div>
<div style="left:0.0px;top:777.3px;width:19.5px;height:1.0px;background:#bdbdbd;"></div>
<div class="tx" style="left:3.2px;top:790.6px;font-size:9.6px;color:#222;font-weight:bold;">74</div>
<div style="left:0.0px;top:803.2px;width:19.5px;height:1.0px;background:#bdbdbd;"></div>
<div class="tx" style="left:3.2px;top:821.9px;font-size:9.6px;color:#222;font-weight:bold;">76</div>
<div style="left:0.0px;top:834.5px;width:19.5px;height:1.0px;background:#bdbdbd;"></div>
<div class="tx" style="left:3.2px;top:842.4px;font-size:9.6px;color:#222;font-weight:bold;">77</div>
<div style="left:0.0px;top:855.0px;width:19.5px;height:1.0px;background:#bdbdbd;"></div>
<div class="tx" style="left:3.2px;top:911.5px;font-size:9.6px;color:#222;font-weight:bold;">78</div>
<div style="left:0.0px;top:924.1px;width:19.5px;height:1.0px;background:#bdbdbd;"></div>
<div class="tx" style="left:3.2px;top:938.4px;font-size:9.6px;color:#222;font-weight:bold;">79</div>
<div style="left:0.0px;top:951.0px;width:19.5px;height:1.0px;background:#bdbdbd;"></div>
<div class="tx" style="left:3.2px;top:960.1px;font-size:9.6px;color:#222;font-weight:bold;">80</div>
<div style="left:0.0px;top:972.8px;width:19.5px;height:1.0px;background:#bdbdbd;"></div>
<div class="tx" style="left:3.2px;top:981.9px;font-size:9.6px;color:#222;font-weight:bold;">81</div>
<div style="left:0.0px;top:994.5px;width:19.5px;height:1.0px;background:#bdbdbd;"></div>
<div class="tx" style="left:3.2px;top:1003.6px;font-size:9.6px;color:#222;font-weight:bold;">82</div>
<div style="left:0.0px;top:1016.2px;width:19.5px;height:1.0px;background:#bdbdbd;"></div>
<div class="tx" style="left:3.2px;top:1025.4px;font-size:9.6px;color:#222;font-weight:bold;">83</div>
<div style="left:0.0px;top:1038.0px;width:19.5px;height:1.0px;background:#bdbdbd;"></div>
<div class="tx" style="left:3.2px;top:1047.1px;font-size:9.6px;color:#222;font-weight:bold;">84</div>
<div style="left:0.0px;top:1059.8px;width:19.5px;height:1.0px;background:#bdbdbd;"></div>
<div class="tx" style="left:3.2px;top:1068.9px;font-size:9.6px;color:#222;font-weight:bold;">85</div>
<div style="left:0.0px;top:1081.5px;width:19.5px;height:1.0px;background:#bdbdbd;"></div>
<div class="tx" style="left:3.2px;top:1090.6px;font-size:9.6px;color:#217346;font-weight:bold;">86</div>
<div style="left:0.0px;top:1103.2px;width:19.5px;height:1.0px;background:#bdbdbd;"></div>
<div class="tx" style="left:3.2px;top:1112.4px;font-size:9.6px;color:#222;font-weight:bold;">87</div>
<div style="left:0.0px;top:1125.0px;width:19.5px;height:1.0px;background:#bdbdbd;"></div>
<div class="tx" style="left:3.2px;top:1134.1px;font-size:9.6px;color:#222;font-weight:bold;">88</div>
<div style="left:0.0px;top:1146.8px;width:19.5px;height:1.0px;background:#bdbdbd;"></div>
<div style="left:0.0px;top:207.5px;width:19.5px;height:1.0px;background:#bdbdbd;"></div>
<div style="left:0.0px;top:612.3px;width:19.5px;height:1.0px;background:#bdbdbd;"></div>
<div style="left:0.0px;top:723.5px;width:19.5px;height:1.0px;background:#bdbdbd;"></div>
<div style="left:0.0px;top:803.5px;width:19.5px;height:1.0px;background:#bdbdbd;"></div>
<div style="left:0.0px;top:1082.7px;width:19.5px;height:21.8px;background:#d2d2d2;"></div>
<div class="tx" style="left:3.2px;top:1091.4px;font-size:9.6px;color:#217346;font-weight:bold;">86</div>
<div style="left:18.0px;top:1082.7px;width:2.5px;height:21.8px;background:#217346;"></div>
<div style="left:2118.0px;top:160.0px;width:30.0px;height:1002.0px;background:#e6e6e6;"></div>
<div style="left:2120.0px;top:216.0px;width:28.0px;height:946.0px;background:#dcdcdc;"></div>
<div style="left:2117.5px;top:178.0px;width:1.0px;height:984.0px;background:#c8c8c8;"></div>
<div style="left:2122.0px;top:169.0px;width:24.0px;height:21.0px;background:#fff;border:1px solid #c8c8c8;box-sizing:border-box;"></div>
<div style="left:2122.0px;top:191.0px;width:24.0px;height:25.0px;background:#fff;border:1px solid #c8c8c8;box-sizing:border-box;"></div>
<div style="left:2123.0px;top:1139.7px;width:22.0px;height:22.3px;background:#fff;border:1px solid #c8c8c8;box-sizing:border-box;"></div>
<svg class="a" style="left:2118px;top:160px" width="30" height="1002" viewBox="2118 160 30 1002"><path d="M2129 183 h10 l-5 -5z" fill="#555"/><path d="M2129 1147 h10 l-5 5z" fill="#555"/></svg>
<div style="left:0.0px;top:1162.0px;width:2148.0px;height:30.0px;background:#e6e6e6;"></div>
<svg class="a" style="left:0;top:1162px" width="2148" height="30" viewBox="0 1162 2148 30"><path d="M37 1171.5 v10 l-5.5 -5z" fill="#bdbdbd"/><path d="M65.5 1171 v11 l6 -5.5z" fill="#1c6b4a"/><rect x="1496.5" y="1172" width="2.6" height="2.6" fill="#9a9a9a"/><rect x="1496.5" y="1177" width="2.6" height="2.6" fill="#9a9a9a"/><rect x="1496.5" y="1182" width="2.6" height="2.6" fill="#9a9a9a"/></svg>
<div style="left:120.7px;top:1162.0px;width:149.3px;height:30.0px;background:#fff;"></div>
<div style="left:123.0px;top:1163.5px;width:144.0px;height:26.5px;background:linear-gradient(#fff 0%,#fbd9d9 45%,#f49a9a 100%);"></div>
<div style="left:120.7px;top:1190.0px;width:149.3px;height:2.0px;background:#217346;"></div>
<div class="tx" style="left:135.0px;top:1165.7px;font-size:19.6px;color:#217346;font-weight:bold;">Reserve Plan</div>
<div style="left:1517.0px;top:1166.0px;width:605.0px;height:25.0px;background:#dcdcdc;"></div>
<div style="left:1518.9px;top:1168.3px;width:22.1px;height:21.7px;background:#fff;border:1px solid #c8c8c8;box-sizing:border-box;"></div>
<div style="left:1551.7px;top:1168.3px;width:92.3px;height:21.7px;background:#fff;border:1px solid #c8c8c8;box-sizing:border-box;"></div>
<div style="left:2096.0px;top:1168.3px;width:22.0px;height:21.7px;background:#fff;border:1px solid #c8c8c8;box-sizing:border-box;"></div>
<svg class="a" style="left:0;top:1162px" width="2148" height="30" viewBox="0 1162 2148 30"><path d="M1533 1173 v10 l-5 -5z" fill="#555"/><path d="M2106 1173 v10 l5 -5z" fill="#555"/></svg>
</body></html>
